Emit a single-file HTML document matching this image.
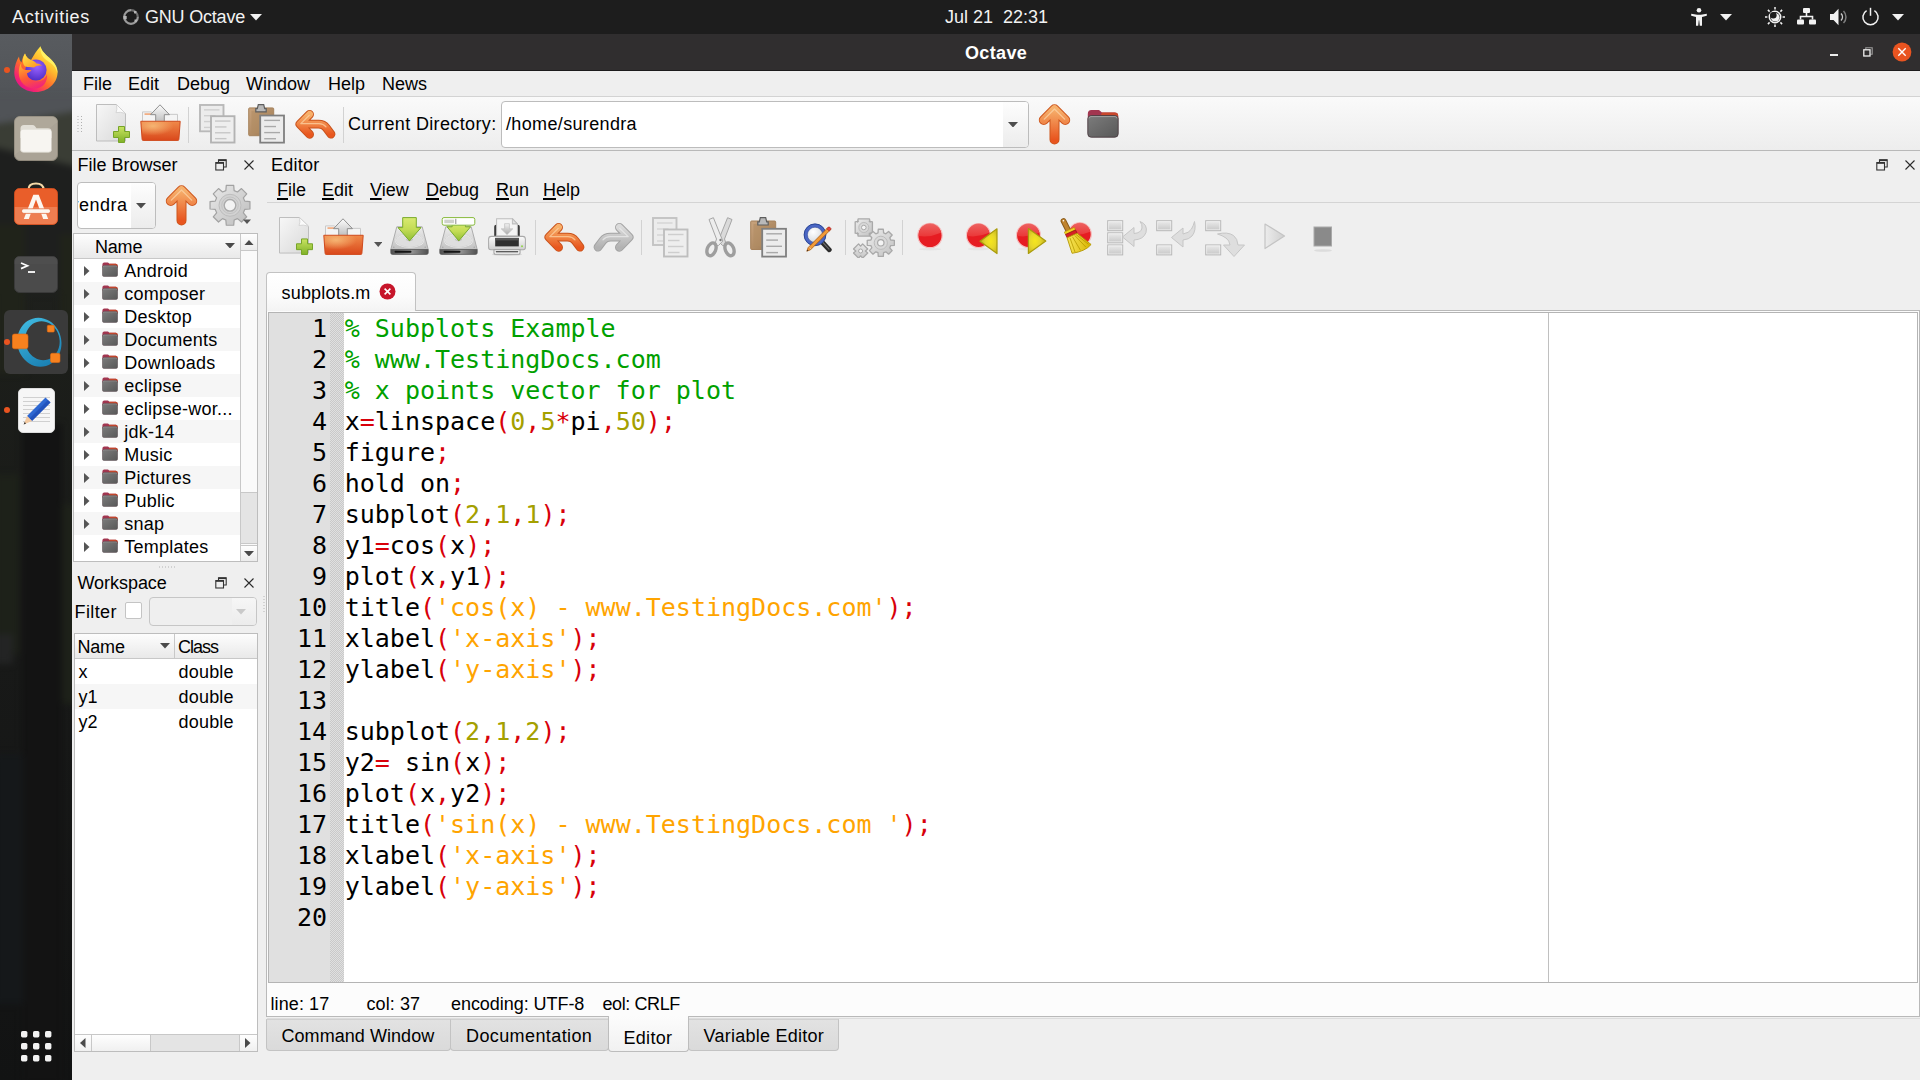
<!DOCTYPE html>
<html lang="en">
<head>
<meta charset="utf-8">
<title>Octave</title>
<style>
*{box-sizing:border-box;margin:0;padding:0}
html,body{width:1920px;height:1080px;overflow:hidden}
body{position:relative;font-family:"Liberation Sans",sans-serif;font-size:18px;color:#000;background:#161616}
.abs{position:absolute}
.t{position:absolute;white-space:pre;line-height:1}
u{text-decoration-thickness:1.500px;text-underline-offset:2px}
.code{position:absolute;white-space:pre;line-height:1;font-family:"DejaVu Sans Mono","Liberation Mono",monospace;font-size:25px}
.c{color:#00a000}.o{color:#d8000a}.n{color:#a4a000}.s{color:#ffa400}
</style>
</head>
<body>
<svg class="abs" style="left:0px;top:34px" width="72" height="1046" viewBox="0 0 72 1046" preserveAspectRatio="none"><defs><linearGradient id="wg" x1="0" y1="0" x2="0" y2="1"><stop offset="0" stop-color="#585b5f"/><stop offset=".07" stop-color="#505357"/><stop offset=".1" stop-color="#3a3c3a"/><stop offset=".14" stop-color="#222322"/><stop offset=".3" stop-color="#1c1e1a"/><stop offset=".6" stop-color="#181918"/><stop offset="1" stop-color="#121313"/></linearGradient><filter id="wb" x="-30%" y="-5%" width="160%" height="110%" color-interpolation-filters="sRGB"><feGaussianBlur stdDeviation="3"/></filter></defs><rect width="72" height="1046" fill="url(#wg)"/><g filter="url(#wb)"><path d="M-10 62L82 62L82 78L-10 90z" fill="#505357"/><path d="M-10 92L82 76L82 150L-10 120z" fill="#3a3d35"/><path d="M-10 112L82 134V260H-10z" fill="#1e1f1e"/><path d="M-5 190h30v150h-30zM60 200h20v120h-20z" fill="#20231a"/><path d="M-5 440h24v180h-24zM62 470h15v200h-15z" fill="#1d2119"/><path d="M-5 600h18v30h-18z" fill="#232424"/><path d="M22 390h40v660h-40z" fill="#131313"/><path d="M-5 720h28v250h-28z" fill="#15181a"/></g></svg>
<div class="abs" style="left:4px;top:310px;width:64px;height:64px;background:#3d3d3d;border-radius:6px;opacity:.92"></div>
<div class="abs" style="left:4px;top:67px;width:6px;height:6px;border-radius:3px;background:#e95420"></div>
<svg class="abs" style="left:14px;top:46px" width="44" height="46" viewBox="0 0 44 46" preserveAspectRatio="none"><defs>
<linearGradient id="g1" x1=".85" y1=".1" x2=".2" y2=".95"><stop offset="0" stop-color="#fff44f"/><stop offset=".3" stop-color="#ffbd2e"/><stop offset=".6" stop-color="#ff6a2b"/><stop offset=".85" stop-color="#f5266f"/><stop offset="1" stop-color="#e31587"/></linearGradient>
<radialGradient id="g2" cx=".55" cy=".35" r=".7"><stop offset="0" stop-color="#9a62ff"/><stop offset="1" stop-color="#4c2bc4"/></radialGradient>
<linearGradient id="g3" x1="0" y1="0" x2="1" y2="1"><stop offset="0" stop-color="#ffe84a"/><stop offset="1" stop-color="#ff8a1e"/></linearGradient>
<linearGradient id="g4" x1=".2" y1="0" x2=".6" y2="1"><stop offset="0" stop-color="#ffb52c"/><stop offset=".55" stop-color="#ff5a36"/><stop offset="1" stop-color="#f0257a"/></linearGradient></defs>
<path d="M26.500 .3C27.500 5 31 8 35 11.500C40 16 44 21 43.500 27.500C43 37 34 46 22 46C9 46 0 37 .3 26C.5 20 2.500 14.500 5 10.500C5.200 13 6 15 7.500 16.500C8 13 9.300 10 11 7.500C12 10.500 14 13 17 14C20 9 23 4 26.500 .3z" fill="url(#g1)"/>
<path d="M26.500 .3C27.500 5 31 8 35 11.500C40 16 44 21 43.500 27.500C42 21 38 17.500 33 14.500C28.500 11.500 26 7 26.500 .3z" fill="#fff56a" opacity=".85"/>
<circle cx="22" cy="24" r="10.600" fill="url(#g2)"/>
<path d="M7.500 16.500C6.500 20 7.500 23.500 11.500 24C14 24.300 15.500 23.500 17.500 24.300C16.500 26 14.500 26.500 13 27.200C13.500 32.500 18 35.800 23.500 35.500C28.500 35.200 32 32 33 28C34 35.500 29 42 22 42.500C12 43 4.800 36 4.800 27C4.800 22.500 5.800 19 7.500 16.500z" fill="url(#g4)"/>
<path d="M11 7.500C12 10.500 14 13 17 14C19.500 14.500 21.500 16 22.500 17.500C25 17.500 27 18.500 28 20C24.500 19 22 20 20 21.500C17 21 14 21.500 11.500 20.500C8.500 19 7.800 12.500 11 7.500z" fill="url(#g3)"/></svg>
<svg class="abs" style="left:14px;top:116px" width="44" height="45" viewBox="0 0 44 45" preserveAspectRatio="none"><rect x=".5" y=".5" width="43" height="44" rx="5.500" fill="#aaa396" stroke="#8f887b"/>
<path d="M.5 39V6Q.5 .5 6 .5H38Q43.500 .5 43.500 6z" fill="#b3ad9f" opacity=".55"/>
<path d="M6.500 12.500Q6.500 9 10 9h8.500q1.500 0 2.300 1l1.700 2.200H34Q37.500 12.200 37.500 15.500V22H6.500z" fill="#e2dfd7"/>
<rect x="6.500" y="13.800" width="31" height="22.500" rx="2.800" fill="#f7f5f1"/><path d="M6.500 33.500v-.2q0 3 3 3h25q3 0 3-3v.2" fill="none" stroke="#d8d4cb" stroke-width=".8"/></svg>
<svg class="abs" style="left:14px;top:182px" width="44" height="43" viewBox="0 0 44 43" preserveAspectRatio="none"><path d="M14.500 8.500V7.500q0-6 7.500-6t7.500 6v1" fill="none" stroke="#f5d9a8" stroke-width="2.200"/>
<rect x=".5" y="6.500" width="43" height="36" rx="5" fill="#e95e2a"/><path d="M.5 25h43v12.500q0 5-5 5h-33q-5 0-5-5z" fill="#ee7d50"/>
<rect x=".5" y="6.500" width="43" height="36" rx="5" fill="none" stroke="#d9501f" stroke-width=".8"/>
<path d="M9.800 37L19.300 12.800h5.400L34.200 37h-5L22 17.600 14.800 37z" fill="#fdf6ef"/>
<rect x="7.500" y="26.800" width="29" height="4.600" rx="2.300" fill="#fdf6ef" stroke="#e0602f" stroke-width=".7"/></svg>
<svg class="abs" style="left:14px;top:256px" width="44" height="37" viewBox="0 0 44 37" preserveAspectRatio="none"><rect x=".5" y=".5" width="43" height="36" rx="5" fill="#4b4b4b" stroke="#3a3a3a"/><path d="M.5 30V5.500Q.5 .5 5.500 .5H38.500Q43.500 .5 43.500 5.500V8H.5z" fill="#515151" opacity=".5"/>
<path d="M7 7l6.500 2.800L7 12.600" fill="none" stroke="#fff" stroke-width="1.700"/><path d="M14 16h7" stroke="#fff" stroke-width="1.800"/></svg>
<div class="abs" style="left:4px;top:339px;width:6px;height:6px;border-radius:3px;background:#e95420"></div>
<svg class="abs" style="left:12px;top:315px" width="52" height="52" viewBox="0 0 52 52" preserveAspectRatio="none"><defs><linearGradient id="g5" x1=".2" y1="0" x2=".7" y2="1"><stop offset="0" stop-color="#3fb9e0"/><stop offset="1" stop-color="#1a7fb2"/></linearGradient></defs>
<path d="M26.300 2.800A22 24.600 -12 1 0 26.400 2.800zM29.500 6.200A17.200 19.600 -12 1 1 29.400 6.200z" fill="url(#g5)" fill-rule="evenodd"/>
<rect x=".3" y="19" width="15.700" height="14.800" rx="2.200" fill="#f7811e" stroke="#e06a10" stroke-width=".6"/>
<rect x="35.300" y="10.300" width="7" height="6.800" rx="1.200" fill="#f7811e" stroke="#e06a10" stroke-width=".6"/>
<rect x="38.500" y="38.300" width="9.500" height="9.200" rx="1.500" fill="#f7811e" stroke="#e06a10" stroke-width=".6"/></svg>
<div class="abs" style="left:4px;top:407px;width:6px;height:6px;border-radius:3px;background:#e95420"></div>
<svg class="abs" style="left:18px;top:388px" width="37" height="45" viewBox="0 0 37 45" preserveAspectRatio="none"><defs><linearGradient id="g6" x1="0" y1="0" x2="1" y2="1"><stop offset="0" stop-color="#3d7be0"/><stop offset="1" stop-color="#1a4fc0"/></linearGradient></defs>
<rect x=".5" y=".5" width="36" height="44" rx="4.500" fill="#f6f6f6" stroke="#dcdcdc"/>
<path d="M5 9.500h27M5 13.500h27M5 17.500h27M5 21.500h27M5 25.500h27M5 29.500h27M5 33.500h27" stroke="#d0d0d0" stroke-width="1"/>
<path d="M27.500 9.500l5 5L14 33l-5-5z" fill="url(#g6)"/><path d="M30 12l2.500 2.500L14 33l-2.500-2.500z" fill="#1b46ad" opacity=".55"/>
<path d="M9 28l5 5-8.300 3.400z" fill="#f3c9a0"/><path d="M5.700 36.400l.9-2.400 1.500 1.500z" fill="#333"/></svg>
<svg class="abs" style="left:21px;top:1031px" width="31" height="31" viewBox="0 0 31 31" preserveAspectRatio="none"><rect x="0" y="0" width="6.400" height="6.400" rx="1.600" fill="#f3f3f3"/><rect x="12" y="0" width="6.400" height="6.400" rx="1.600" fill="#f3f3f3"/><rect x="24" y="0" width="6.400" height="6.400" rx="1.600" fill="#f3f3f3"/><rect x="0" y="12" width="6.400" height="6.400" rx="1.600" fill="#f3f3f3"/><rect x="12" y="12" width="6.400" height="6.400" rx="1.600" fill="#f3f3f3"/><rect x="24" y="12" width="6.400" height="6.400" rx="1.600" fill="#f3f3f3"/><rect x="0" y="24" width="6.400" height="6.400" rx="1.600" fill="#f3f3f3"/><rect x="12" y="24" width="6.400" height="6.400" rx="1.600" fill="#f3f3f3"/><rect x="24" y="24" width="6.400" height="6.400" rx="1.600" fill="#f3f3f3"/></svg>
<div class="abs" style="left:0px;top:0px;width:1920px;height:34px;background:#1d1d1d"></div>
<span class="t" style="left:12px;top:8.36px;font-size:18px;color:#f2f2f2;letter-spacing:.7px">Activities</span>
<svg class="abs" style="left:122px;top:8px" width="18" height="18" viewBox="0 0 18 18" preserveAspectRatio="none"><path d="M9 2.200A6.800 6.800 0 1 0 15.800 9" fill="none" stroke="#9a9a9a" stroke-width="2.200"/><path d="M9 2.200A6.800 6.800 0 0 1 15.800 9" fill="none" stroke="#6e6e6e" stroke-width="2.200"/><rect x="1.500" y="8" width="3.200" height="3.200" fill="#b5b5b5"/><rect x="12" y="3" width="2.400" height="2.400" fill="#b5b5b5"/><rect x="12.500" y="11.500" width="2.400" height="2.400" fill="#b5b5b5"/></svg>
<span class="t" style="left:145px;top:8.36px;font-size:18px;color:#f2f2f2;letter-spacing:-.2px">GNU Octave</span>
<svg class="abs" style="left:250px;top:14px" width="12" height="6.5" viewBox="0 0 12 6.5" preserveAspectRatio="none"><path d="M0 0h12L6.0 6.5z" fill="#f2f2f2"/></svg>
<span class="t" style="left:945px;top:8.36px;font-size:18px;color:#f2f2f2;">Jul 21&nbsp; 22:31</span>
<svg class="abs" style="left:1690px;top:7px" width="18" height="20" viewBox="0 0 18 20" preserveAspectRatio="none"><circle cx="9" cy="3.200" r="2.300" fill="#f2f2f2"/><path d="M1.200 6.800l6 1h3.600l6-1v1.900l-4.800 1.200v8.900h-2.200l-.6-5.600h-.4l-.6 5.600H6V9.900L1.200 8.700z" fill="#f2f2f2"/></svg>
<svg class="abs" style="left:1720px;top:14px" width="12" height="6.5" viewBox="0 0 12 6.5" preserveAspectRatio="none"><path d="M0 0h12L6.0 6.5z" fill="#f2f2f2"/></svg>
<svg class="abs" style="left:1764px;top:6px" width="22" height="22" viewBox="0 0 22 22" preserveAspectRatio="none"><g stroke="#f2f2f2" stroke-width="1.500" fill="none"><circle cx="11" cy="11" r="5.700"/><path d="M11 1v2.400M11 18.600V21M1 11h2.400M18.600 11H21M3.900 3.900l1.700 1.700M16.400 16.400l1.700 1.700M3.900 18.100l1.700-1.700M16.400 5.600l1.700-1.700"/></g><circle cx="11.200" cy="11.200" r="4.300" fill="#f2f2f2"/><circle cx="9.300" cy="9.200" r="3.300" fill="#1d1d1d"/></svg>
<svg class="abs" style="left:1796px;top:7px" width="21" height="19" viewBox="0 0 21 19" preserveAspectRatio="none"><g fill="#f2f2f2"><rect x="7" y="1" width="7" height="5" rx="1"/><rect x="1" y="12.500" width="7" height="5" rx="1"/><rect x="13" y="12.500" width="7" height="5" rx="1"/></g><path d="M10.500 6v3.500M4.500 12.500v-3h12v3" fill="none" stroke="#f2f2f2" stroke-width="1.600"/></svg>
<svg class="abs" style="left:1829px;top:8px" width="20" height="18" viewBox="0 0 20 18" preserveAspectRatio="none"><path d="M1 6h3.500L9.500 .8v16.400L4.500 12H1z" fill="#f2f2f2"/><path d="M12 5.500a5 5 0 0 1 0 7" fill="none" stroke="#c9c9c9" stroke-width="1.500"/><path d="M14.500 3a8.500 8.500 0 0 1 0 12" fill="none" stroke="#7d7d7d" stroke-width="1.500"/></svg>
<svg class="abs" style="left:1861px;top:7px" width="19" height="19" viewBox="0 0 19 19" preserveAspectRatio="none"><path d="M5.600 3.600a7.600 7.600 0 1 0 7.800 0" fill="none" stroke="#f2f2f2" stroke-width="1.500"/><path d="M9.500 .8v8" stroke="#f2f2f2" stroke-width="1.500"/></svg>
<svg class="abs" style="left:1892px;top:14px" width="12" height="6.5" viewBox="0 0 12 6.5" preserveAspectRatio="none"><path d="M0 0h12L6.0 6.5z" fill="#f2f2f2"/></svg>
<div class="abs" style="left:72px;top:34px;width:1848px;height:37px;background:#302e2f"></div>
<div class="abs" style="left:72px;top:70px;width:1848px;height:1px;background:#1c1b1c"></div>
<span class="t" style="left:965px;top:44.06px;font-size:18px;color:#fff;font-weight:bold;letter-spacing:.35px">Octave</span>
<div class="abs" style="left:1830px;top:54px;width:8px;height:1.5px;background:#ececec"></div>
<svg class="abs" style="left:1863px;top:47px" width="10" height="10" viewBox="0 0 10 10" preserveAspectRatio="none"><path d="M2.800 2.600V.8h6.400v6.400H7.400" fill="none" stroke="#9a9a9a" stroke-width="1.100"/><rect x=".8" y="2.800" width="6.200" height="6.200" fill="none" stroke="#f0f0f0" stroke-width="1.300"/></svg>
<svg class="abs" style="left:1892px;top:42px" width="20" height="20" viewBox="0 0 20 20" preserveAspectRatio="none"><circle cx="10" cy="10" r="9.400" fill="#e95420"/><path d="M6.300 6.300l7.400 7.400M13.700 6.300l-7.400 7.400" stroke="#fff" stroke-width="1.400"/></svg>
<div class="abs" style="left:72px;top:71px;width:1848px;height:1009px;background:#efefef"></div>
<div class="abs" style="left:72px;top:96px;width:1848px;height:1px;background:#d3d3d3"></div>
<span class="t" style="left:83px;top:75.36px;font-size:18px;">File</span>
<span class="t" style="left:128px;top:75.36px;font-size:18px;">Edit</span>
<span class="t" style="left:177px;top:75.36px;font-size:18px;">Debug</span>
<span class="t" style="left:246px;top:75.36px;font-size:18px;">Window</span>
<span class="t" style="left:328px;top:75.36px;font-size:18px;">Help</span>
<span class="t" style="left:382px;top:75.36px;font-size:18px;">News</span>
<div class="abs" style="left:72px;top:97px;width:1848px;height:53px;background:linear-gradient(180deg,#fafafa,#ededed)"></div>
<div class="abs" style="left:72px;top:150px;width:1848px;height:1px;background:#b9b9b9"></div>
<svg class="abs" style="left:77px;top:115px" width="6" height="18" viewBox="0 0 6 18" preserveAspectRatio="none"><rect x="0.5" y="1" width="1" height="1" fill="#b0b0b0"/><rect x="0.5" y="4" width="1" height="1" fill="#b0b0b0"/><rect x="0.5" y="7" width="1" height="1" fill="#b0b0b0"/><rect x="0.5" y="10" width="1" height="1" fill="#b0b0b0"/><rect x="0.5" y="13" width="1" height="1" fill="#b0b0b0"/><rect x="0.5" y="16" width="1" height="1" fill="#b0b0b0"/><rect x="4" y="1" width="1" height="1" fill="#b0b0b0"/><rect x="4" y="4" width="1" height="1" fill="#b0b0b0"/><rect x="4" y="7" width="1" height="1" fill="#b0b0b0"/><rect x="4" y="10" width="1" height="1" fill="#b0b0b0"/><rect x="4" y="13" width="1" height="1" fill="#b0b0b0"/><rect x="4" y="16" width="1" height="1" fill="#b0b0b0"/></svg>
<svg class="abs" style="left:96px;top:104px" width="34" height="39" viewBox="0 0 34 39" preserveAspectRatio="none"><defs><linearGradient id="g7" x1="0" y1="0" x2="1" y2="1"><stop offset="0" stop-color="#f7f7f7"/><stop offset="1" stop-color="#d9d9d9"/></linearGradient><linearGradient id="g8" x1="0" y1="0" x2="0" y2="1"><stop offset="0" stop-color="#c9e462"/><stop offset="1" stop-color="#7fb127"/></linearGradient></defs>
<path d="M.5 .5h20l9 9v27.5H.5z" fill="url(#g7)" stroke="#bdbdbd"/><path d="M20.500 .5q1 5.500-.5 8.200 4-1.200 9.500 .8z" fill="#fbfbfb" stroke="#cfcfcf" stroke-width=".8" stroke-linejoin="round"/>
<path d="M22.5 22.5h6v5h5v6h-5v5h-6v-5h-5v-6h5z" fill="url(#g8)" stroke="#76a428" stroke-linejoin="round"/></svg>
<svg class="abs" style="left:139.5px;top:103.8px" width="41" height="37.5" viewBox="0 0 41 38" preserveAspectRatio="none"><defs><linearGradient id="g9" x1="0" y1="0" x2="0" y2="1"><stop offset="0" stop-color="#f08a4a"/><stop offset="1" stop-color="#d9471a"/></linearGradient><linearGradient id="g10" x1="0" y1="0" x2="0" y2="1"><stop offset="0" stop-color="#fdfdfd"/><stop offset="1" stop-color="#bcbcbc"/></linearGradient></defs>
<path d="M2.5 8h9l2 2.5h24v8h-35z" fill="#f4f4f4" stroke="#c9c9c9"/><path d="M4.5 10.2h7" stroke="#f08a4a" stroke-width="1.2"/>
<path d="M20 .8l9.5 10h-5.2v8h-8.6v-8h-5.2z" fill="url(#g10)" stroke="#8f8f8f" stroke-linejoin="round"/>
<path d="M.8 17.5h39.4l-1.3 18.2q-.1 1.5-1.6 1.5H3.7q-1.5 0-1.6-1.5z" fill="url(#g9)" stroke="#cf4a1c"/><radialGradient id="g9h" cx=".3" cy=".25" r=".55"><stop offset="0" stop-color="#f9c884" stop-opacity=".75"/><stop offset="1" stop-color="#f9c884" stop-opacity="0"/></radialGradient><path d="M1.500 18h38l-1.200 17.500H2.700z" fill="url(#g9h)"/></svg>
<div class="abs" style="left:188px;top:107px;width:1px;height:36px;background:#d2d2d2"></div>
<svg class="abs" style="left:198.5px;top:104px" width="37" height="40" viewBox="0 0 37 41" preserveAspectRatio="none"><rect x="1" y="1" width="23.5" height="27" fill="#ececec" stroke="#b9b9b9" stroke-width="1.9"/><path d="M5 6.0h15.5" stroke="#cfcfcf" stroke-width="1.4"/><path d="M5 12.0h11.5" stroke="#cfcfcf" stroke-width="1.4"/><path d="M5 18.0h15.5" stroke="#cfcfcf" stroke-width="1.4"/><path d="M5 24.0h11.5" stroke="#cfcfcf" stroke-width="1.4"/><rect x="12" y="12.5" width="23.5" height="27" fill="#eeeeee" stroke="#b3b3b3" stroke-width="1.9"/><path d="M16 17.5h15.5" stroke="#c6c6c6" stroke-width="1.4"/><path d="M16 23.5h11.5" stroke="#c6c6c6" stroke-width="1.4"/><path d="M16 29.5h15.5" stroke="#c6c6c6" stroke-width="1.4"/><path d="M16 35.5h11.5" stroke="#c6c6c6" stroke-width="1.4"/></svg>
<svg class="abs" style="left:247.5px;top:104px" width="37" height="40" viewBox="0 0 37 41" preserveAspectRatio="none"><defs><linearGradient id="g11" x1="0" y1="0" x2="1" y2="1"><stop offset="0" stop-color="#c9a47e"/><stop offset="1" stop-color="#9b774f"/></linearGradient></defs>
<rect x=".7" y="4" width="25" height="28.5" rx="1" fill="url(#g11)" stroke="#a6825c"/><rect x="3.5" y="7" width="19.5" height="22.5" fill="#b08c63" opacity=".55"/>
<path d="M10.300 .6h5.400l1 4.200h1.500v3.200H7.800V4.800h1.500z" fill="#b9b9b9" stroke="#5e5e5e" stroke-width="1.200"/><rect x="12.2" y="11.8" width="23.8" height="27.8" fill="#ececec" stroke="#7f7f7f" stroke-width="1.8"/><path d="M16.2 16.8h15.8" stroke="#a9a9a9" stroke-width="1.4"/><path d="M16.2 23.1h11.8" stroke="#a9a9a9" stroke-width="1.4"/><path d="M16.2 29.3h15.8" stroke="#a9a9a9" stroke-width="1.4"/><path d="M16.2 35.6h11.8" stroke="#a9a9a9" stroke-width="1.4"/></svg>
<svg class="abs" style="left:295px;top:108.5px" width="41" height="31" viewBox="0 0 41 31" preserveAspectRatio="none"><defs><linearGradient id="g12" x1="0" y1="0" x2="0" y2="1"><stop offset="0" stop-color="#f8b06a"/><stop offset="1" stop-color="#e8571f"/></linearGradient></defs>
<g><path d="M14.600 5.300L4.900 15.200L14.600 25.300M6 15.200H23.500Q28.600 15.200 31.300 18.800L36 25.200" fill="none" stroke="#c9531c" stroke-width="8.800" stroke-linecap="round" stroke-linejoin="round"/>
<path d="M14.600 5.300L4.900 15.200L14.600 25.300M6 15.200H23.500Q28.600 15.200 31.300 18.800L36 25.200" fill="none" stroke="url(#g12)" stroke-width="6.800" stroke-linecap="round" stroke-linejoin="round"/>
<path d="M14.200 6.400L5.800 14.600H24Q28.500 14.700 31 17.800" fill="none" stroke="#fcd3a4" stroke-width="1.300" stroke-linecap="round" stroke-linejoin="round" opacity=".75"/></g></svg>
<div class="abs" style="left:343px;top:107px;width:1px;height:36px;background:#d2d2d2"></div>
<span class="t" style="left:348px;top:115.36px;font-size:18px;letter-spacing:.36px">Current Directory:</span>
<div class="abs" style="left:501px;top:101px;width:528px;height:47px;background:#fff;border:1px solid #bcbcbc;border-radius:4px"></div>
<div class="abs" style="left:1003px;top:102px;width:25px;height:45px;background:linear-gradient(180deg,#fdfdfd,#ececec);border-radius:0 3px 3px 0"></div>
<svg class="abs" style="left:1008px;top:121.5px" width="10" height="5.5" viewBox="0 0 10 5.5" preserveAspectRatio="none"><path d="M0 0h10L5.0 5.5z" fill="#4d4d4d"/></svg>
<span class="t" style="left:506px;top:115.36px;font-size:18px;letter-spacing:.35px">/home/surendra</span>
<svg class="abs" style="left:1037.5px;top:104px" width="33" height="41" viewBox="0 0 33 41" preserveAspectRatio="none"><defs><linearGradient id="g13" x1="0" y1="0" x2="0" y2="1"><stop offset="0" stop-color="#f6b06c"/><stop offset="1" stop-color="#e8551f"/></linearGradient></defs>
<path d="M5.800 16L16.500 5.300L27.200 16M16.500 7V35.500" fill="none" stroke="#cd561d" stroke-width="10" stroke-linecap="round" stroke-linejoin="round"/>
<path d="M5.800 16L16.500 5.300L27.200 16M16.500 7V35.500" fill="none" stroke="url(#g13)" stroke-width="8" stroke-linecap="round" stroke-linejoin="round"/>
<path d="M6.200 15.200L16.500 5L26.800 15.200" fill="none" stroke="#fbd3a6" stroke-width="1.200" stroke-linecap="round" stroke-linejoin="round" opacity=".75"/></svg>
<svg class="abs" style="left:1087px;top:108.5px" width="32" height="29" viewBox="0 0 32 29" preserveAspectRatio="none"><defs><linearGradient id="g14" x1="0" y1="0" x2="1" y2="1"><stop offset="0" stop-color="#7c7c7c"/><stop offset="1" stop-color="#585858"/></linearGradient></defs>
<path d="M.8 5Q.8 1 4.5 1H12l3 2.6h12.5Q31.2 3.6 31.2 7V10H.8z" fill="#a23650"/><path d="M15 3.6h12.5Q31.2 3.6 31.2 7v3H12z" fill="#c8472b"/>
<rect x=".8" y="6.6" width="30.4" height="21.6" rx="3.4" fill="url(#g14)" stroke="#4b3a40" stroke-width=".9"/><path d="M2 9.4Q2 7.6 4 7.6h24Q30 7.6 30 9.4" fill="none" stroke="#a7a7a7" stroke-width=".9"/></svg>
<span class="t" style="left:77.5px;top:155.86px;font-size:18px;">File Browser</span>
<svg class="abs" style="left:215px;top:158.5px" width="12" height="12" viewBox="0 0 12 12" preserveAspectRatio="none"><path d="M3.500 3V.8h7.700v7.200H8.500" fill="none" stroke="#333" stroke-width="1.100"/><path d="M3.500 1.300h7.700" stroke="#333" stroke-width="1.600"/><rect x=".8" y="3.600" width="7.700" height="7.400" fill="none" stroke="#333" stroke-width="1.100"/><path d="M.8 4h7.700" stroke="#333" stroke-width="1.600"/></svg>
<svg class="abs" style="left:244px;top:160px" width="10" height="10" viewBox="0 0 10 10" preserveAspectRatio="none"><path d="M.5 .5l9 9M9.500 .5l-9 9" stroke="#2a2a2a" stroke-width="1.100"/></svg>
<div class="abs" style="left:77px;top:182px;width:79px;height:47px;background:#fff;border:1px solid #bdbdbd;border-radius:4px"></div>
<div class="abs" style="left:131px;top:183px;width:24px;height:45px;background:linear-gradient(180deg,#fdfdfd,#ececec);border-radius:0 3px 3px 0"></div>
<div class="abs" style="left:78px;top:190px;width:52px;height:30px;overflow:hidden"><span class="t" style="left:-5.5px;top:5.86px;font-size:18px;letter-spacing:.5px">rendra</span></div>
<svg class="abs" style="left:136px;top:203px" width="10" height="5.5" viewBox="0 0 10 5.5" preserveAspectRatio="none"><path d="M0 0h10L5.0 5.5z" fill="#4d4d4d"/></svg>
<svg class="abs" style="left:164.5px;top:184.5px" width="33" height="41" viewBox="0 0 33 41" preserveAspectRatio="none"><defs><linearGradient id="g15" x1="0" y1="0" x2="0" y2="1"><stop offset="0" stop-color="#f6b06c"/><stop offset="1" stop-color="#e8551f"/></linearGradient></defs>
<path d="M5.800 16L16.500 5.300L27.200 16M16.500 7V35.500" fill="none" stroke="#cd561d" stroke-width="10" stroke-linecap="round" stroke-linejoin="round"/>
<path d="M5.800 16L16.500 5.300L27.200 16M16.500 7V35.500" fill="none" stroke="url(#g15)" stroke-width="8" stroke-linecap="round" stroke-linejoin="round"/>
<path d="M6.200 15.200L16.500 5L26.800 15.200" fill="none" stroke="#fbd3a6" stroke-width="1.200" stroke-linecap="round" stroke-linejoin="round" opacity=".75"/></svg>
<svg class="abs" style="left:209px;top:184px" width="42" height="42" viewBox="0 0 42 42" preserveAspectRatio="none"><defs><linearGradient id="g16" x1="0" y1="0" x2="1" y2="1"><stop offset="0" stop-color="#e9e9e9"/><stop offset="1" stop-color="#bdbdbd"/></linearGradient></defs>
<path d="M16.84 6.58L17.29 1.34L24.71 1.34L25.16 6.58L28.47 7.94L32.49 4.56L37.74 9.81L34.36 13.83L35.72 17.14L40.96 17.59L40.96 25.01L35.72 25.46L34.36 28.77L37.74 32.79L32.49 38.04L28.47 34.66L25.16 36.02L24.71 41.26L17.29 41.26L16.84 36.02L13.53 34.66L9.51 38.04L4.26 32.79L7.64 28.77L6.28 25.46L1.04 25.01L1.04 17.59L6.28 17.14L7.64 13.83L4.26 9.81L9.51 4.56L13.53 7.94z" fill="url(#g16)" stroke="#a2a2a2" stroke-width="1.2" stroke-linejoin="round"/>
<circle cx="21" cy="21.300" r="11" fill="#d2d2d2" stroke="#bdbdbd" stroke-width="1"/><circle cx="21" cy="21.300" r="8.300" fill="none" stroke="#c2c2c2" stroke-width="1"/><circle cx="21" cy="21.300" r="5.800" fill="#f3f3f3" stroke="#ababab" stroke-width="1.400"/><path d="M34 35.500h8l-4 4.600z" fill="#555"/></svg>
<div class="abs" style="left:73px;top:233px;width:185px;height:329px;background:#fff;border:1px solid #bdbdbd"></div>
<div class="abs" style="left:74px;top:234px;width:167px;height:25px;background:linear-gradient(180deg,#fdfdfd,#e9e9e9);border-bottom:1px solid #c8c8c8;border-right:1px solid #c8c8c8"></div>
<span class="t" style="left:95px;top:238.16px;font-size:18px;letter-spacing:-.2px">Name</span>
<svg class="abs" style="left:225px;top:242.5px" width="10" height="5.5" viewBox="0 0 10 5.5" preserveAspectRatio="none"><path d="M0 0h10L5.0 5.5z" fill="#4a4a4a"/></svg>
<div class="abs" style="left:241px;top:234px;width:16px;height:327px;background:#fafafa"></div>
<div class="abs" style="left:240px;top:234px;width:1px;height:327px;background:#c8c8c8"></div>
<div class="abs" style="left:241px;top:234px;width:16px;height:17px;background:linear-gradient(180deg,#fefefe,#ececec);border-bottom:1px solid #c8c8c8"></div>
<svg class="abs" style="left:244px;top:239.5px" width="10" height="5.5" viewBox="0 0 10 5.5" preserveAspectRatio="none"><path d="M0 5.5h10L5.0 0z" fill="#4a4a4a"/></svg>
<div class="abs" style="left:241px;top:492px;width:16px;height:52px;background:#e4e4e4;border-top:1px solid #c8c8c8;border-bottom:1px solid #c8c8c8"></div>
<div class="abs" style="left:241px;top:545px;width:16px;height:16px;background:linear-gradient(180deg,#fefefe,#ececec);border-top:1px solid #c8c8c8"></div>
<svg class="abs" style="left:244px;top:550.5px" width="10" height="5.5" viewBox="0 0 10 5.5" preserveAspectRatio="none"><path d="M0 0h10L5.0 5.5z" fill="#4a4a4a"/></svg>
<svg class="abs" style="left:84px;top:266px" width="5.5" height="10" viewBox="0 0 5.5 10" preserveAspectRatio="none"><path d="M0 0L5.5 5.0L0 10z" fill="#555"/></svg>
<svg class="abs" style="left:102px;top:262px" width="16" height="15" viewBox="0 0 32 29" preserveAspectRatio="none"><defs><linearGradient id="g17" x1="0" y1="0" x2="1" y2="1"><stop offset="0" stop-color="#7c7c7c"/><stop offset="1" stop-color="#585858"/></linearGradient></defs>
<path d="M.8 5Q.8 1 4.5 1H12l3 2.6h12.5Q31.2 3.6 31.2 7V10H.8z" fill="#a23650"/><path d="M15 3.6h12.5Q31.2 3.6 31.2 7v3H12z" fill="#c8472b"/>
<rect x=".8" y="6.6" width="30.4" height="21.6" rx="3.4" fill="url(#g17)" stroke="#4b3a40" stroke-width=".9"/><path d="M2 9.4Q2 7.6 4 7.6h24Q30 7.6 30 9.4" fill="none" stroke="#a7a7a7" stroke-width=".9"/></svg>
<span class="t" style="left:124.3px;top:261.56px;font-size:18px;letter-spacing:.25px">Android</span>
<div class="abs" style="left:74px;top:282px;width:166px;height:23px;background:#f6f6f6"></div>
<svg class="abs" style="left:84px;top:289px" width="5.5" height="10" viewBox="0 0 5.5 10" preserveAspectRatio="none"><path d="M0 0L5.5 5.0L0 10z" fill="#555"/></svg>
<svg class="abs" style="left:102px;top:285px" width="16" height="15" viewBox="0 0 32 29" preserveAspectRatio="none"><defs><linearGradient id="g18" x1="0" y1="0" x2="1" y2="1"><stop offset="0" stop-color="#7c7c7c"/><stop offset="1" stop-color="#585858"/></linearGradient></defs>
<path d="M.8 5Q.8 1 4.5 1H12l3 2.6h12.5Q31.2 3.6 31.2 7V10H.8z" fill="#a23650"/><path d="M15 3.6h12.5Q31.2 3.6 31.2 7v3H12z" fill="#c8472b"/>
<rect x=".8" y="6.6" width="30.4" height="21.6" rx="3.4" fill="url(#g18)" stroke="#4b3a40" stroke-width=".9"/><path d="M2 9.4Q2 7.6 4 7.6h24Q30 7.6 30 9.4" fill="none" stroke="#a7a7a7" stroke-width=".9"/></svg>
<span class="t" style="left:124.3px;top:284.56px;font-size:18px;letter-spacing:.25px">composer</span>
<svg class="abs" style="left:84px;top:312px" width="5.5" height="10" viewBox="0 0 5.5 10" preserveAspectRatio="none"><path d="M0 0L5.5 5.0L0 10z" fill="#555"/></svg>
<svg class="abs" style="left:102px;top:308px" width="16" height="15" viewBox="0 0 32 29" preserveAspectRatio="none"><defs><linearGradient id="g19" x1="0" y1="0" x2="1" y2="1"><stop offset="0" stop-color="#7c7c7c"/><stop offset="1" stop-color="#585858"/></linearGradient></defs>
<path d="M.8 5Q.8 1 4.5 1H12l3 2.6h12.5Q31.2 3.6 31.2 7V10H.8z" fill="#a23650"/><path d="M15 3.6h12.5Q31.2 3.6 31.2 7v3H12z" fill="#c8472b"/>
<rect x=".8" y="6.6" width="30.4" height="21.6" rx="3.4" fill="url(#g19)" stroke="#4b3a40" stroke-width=".9"/><path d="M2 9.4Q2 7.6 4 7.6h24Q30 7.6 30 9.4" fill="none" stroke="#a7a7a7" stroke-width=".9"/></svg>
<span class="t" style="left:124.3px;top:307.56px;font-size:18px;letter-spacing:.25px">Desktop</span>
<div class="abs" style="left:74px;top:328px;width:166px;height:23px;background:#f6f6f6"></div>
<svg class="abs" style="left:84px;top:335px" width="5.5" height="10" viewBox="0 0 5.5 10" preserveAspectRatio="none"><path d="M0 0L5.5 5.0L0 10z" fill="#555"/></svg>
<svg class="abs" style="left:102px;top:331px" width="16" height="15" viewBox="0 0 32 29" preserveAspectRatio="none"><defs><linearGradient id="g20" x1="0" y1="0" x2="1" y2="1"><stop offset="0" stop-color="#7c7c7c"/><stop offset="1" stop-color="#585858"/></linearGradient></defs>
<path d="M.8 5Q.8 1 4.5 1H12l3 2.6h12.5Q31.2 3.6 31.2 7V10H.8z" fill="#a23650"/><path d="M15 3.6h12.5Q31.2 3.6 31.2 7v3H12z" fill="#c8472b"/>
<rect x=".8" y="6.6" width="30.4" height="21.6" rx="3.4" fill="url(#g20)" stroke="#4b3a40" stroke-width=".9"/><path d="M2 9.4Q2 7.6 4 7.6h24Q30 7.6 30 9.4" fill="none" stroke="#a7a7a7" stroke-width=".9"/></svg>
<span class="t" style="left:124.3px;top:330.56px;font-size:18px;letter-spacing:.25px">Documents</span>
<svg class="abs" style="left:84px;top:358px" width="5.5" height="10" viewBox="0 0 5.5 10" preserveAspectRatio="none"><path d="M0 0L5.5 5.0L0 10z" fill="#555"/></svg>
<svg class="abs" style="left:102px;top:354px" width="16" height="15" viewBox="0 0 32 29" preserveAspectRatio="none"><defs><linearGradient id="g21" x1="0" y1="0" x2="1" y2="1"><stop offset="0" stop-color="#7c7c7c"/><stop offset="1" stop-color="#585858"/></linearGradient></defs>
<path d="M.8 5Q.8 1 4.5 1H12l3 2.6h12.5Q31.2 3.6 31.2 7V10H.8z" fill="#a23650"/><path d="M15 3.6h12.5Q31.2 3.6 31.2 7v3H12z" fill="#c8472b"/>
<rect x=".8" y="6.6" width="30.4" height="21.6" rx="3.4" fill="url(#g21)" stroke="#4b3a40" stroke-width=".9"/><path d="M2 9.4Q2 7.6 4 7.6h24Q30 7.6 30 9.4" fill="none" stroke="#a7a7a7" stroke-width=".9"/></svg>
<span class="t" style="left:124.3px;top:353.56px;font-size:18px;letter-spacing:.25px">Downloads</span>
<div class="abs" style="left:74px;top:374px;width:166px;height:23px;background:#f6f6f6"></div>
<svg class="abs" style="left:84px;top:381px" width="5.5" height="10" viewBox="0 0 5.5 10" preserveAspectRatio="none"><path d="M0 0L5.5 5.0L0 10z" fill="#555"/></svg>
<svg class="abs" style="left:102px;top:377px" width="16" height="15" viewBox="0 0 32 29" preserveAspectRatio="none"><defs><linearGradient id="g22" x1="0" y1="0" x2="1" y2="1"><stop offset="0" stop-color="#7c7c7c"/><stop offset="1" stop-color="#585858"/></linearGradient></defs>
<path d="M.8 5Q.8 1 4.5 1H12l3 2.6h12.5Q31.2 3.6 31.2 7V10H.8z" fill="#a23650"/><path d="M15 3.6h12.5Q31.2 3.6 31.2 7v3H12z" fill="#c8472b"/>
<rect x=".8" y="6.6" width="30.4" height="21.6" rx="3.4" fill="url(#g22)" stroke="#4b3a40" stroke-width=".9"/><path d="M2 9.4Q2 7.6 4 7.6h24Q30 7.6 30 9.4" fill="none" stroke="#a7a7a7" stroke-width=".9"/></svg>
<span class="t" style="left:124.3px;top:376.56px;font-size:18px;letter-spacing:.25px">eclipse</span>
<svg class="abs" style="left:84px;top:404px" width="5.5" height="10" viewBox="0 0 5.5 10" preserveAspectRatio="none"><path d="M0 0L5.5 5.0L0 10z" fill="#555"/></svg>
<svg class="abs" style="left:102px;top:400px" width="16" height="15" viewBox="0 0 32 29" preserveAspectRatio="none"><defs><linearGradient id="g23" x1="0" y1="0" x2="1" y2="1"><stop offset="0" stop-color="#7c7c7c"/><stop offset="1" stop-color="#585858"/></linearGradient></defs>
<path d="M.8 5Q.8 1 4.5 1H12l3 2.6h12.5Q31.2 3.6 31.2 7V10H.8z" fill="#a23650"/><path d="M15 3.6h12.5Q31.2 3.6 31.2 7v3H12z" fill="#c8472b"/>
<rect x=".8" y="6.6" width="30.4" height="21.6" rx="3.4" fill="url(#g23)" stroke="#4b3a40" stroke-width=".9"/><path d="M2 9.4Q2 7.6 4 7.6h24Q30 7.6 30 9.4" fill="none" stroke="#a7a7a7" stroke-width=".9"/></svg>
<span class="t" style="left:124.3px;top:399.56px;font-size:18px;letter-spacing:.25px">eclipse-wor...</span>
<div class="abs" style="left:74px;top:420px;width:166px;height:23px;background:#f6f6f6"></div>
<svg class="abs" style="left:84px;top:427px" width="5.5" height="10" viewBox="0 0 5.5 10" preserveAspectRatio="none"><path d="M0 0L5.5 5.0L0 10z" fill="#555"/></svg>
<svg class="abs" style="left:102px;top:423px" width="16" height="15" viewBox="0 0 32 29" preserveAspectRatio="none"><defs><linearGradient id="g24" x1="0" y1="0" x2="1" y2="1"><stop offset="0" stop-color="#7c7c7c"/><stop offset="1" stop-color="#585858"/></linearGradient></defs>
<path d="M.8 5Q.8 1 4.5 1H12l3 2.6h12.5Q31.2 3.6 31.2 7V10H.8z" fill="#a23650"/><path d="M15 3.6h12.5Q31.2 3.6 31.2 7v3H12z" fill="#c8472b"/>
<rect x=".8" y="6.6" width="30.4" height="21.6" rx="3.4" fill="url(#g24)" stroke="#4b3a40" stroke-width=".9"/><path d="M2 9.4Q2 7.6 4 7.6h24Q30 7.6 30 9.4" fill="none" stroke="#a7a7a7" stroke-width=".9"/></svg>
<span class="t" style="left:124.3px;top:422.56px;font-size:18px;letter-spacing:.25px">jdk-14</span>
<svg class="abs" style="left:84px;top:450px" width="5.5" height="10" viewBox="0 0 5.5 10" preserveAspectRatio="none"><path d="M0 0L5.5 5.0L0 10z" fill="#555"/></svg>
<svg class="abs" style="left:102px;top:446px" width="16" height="15" viewBox="0 0 32 29" preserveAspectRatio="none"><defs><linearGradient id="g25" x1="0" y1="0" x2="1" y2="1"><stop offset="0" stop-color="#7c7c7c"/><stop offset="1" stop-color="#585858"/></linearGradient></defs>
<path d="M.8 5Q.8 1 4.5 1H12l3 2.6h12.5Q31.2 3.6 31.2 7V10H.8z" fill="#a23650"/><path d="M15 3.6h12.5Q31.2 3.6 31.2 7v3H12z" fill="#c8472b"/>
<rect x=".8" y="6.6" width="30.4" height="21.6" rx="3.4" fill="url(#g25)" stroke="#4b3a40" stroke-width=".9"/><path d="M2 9.4Q2 7.6 4 7.6h24Q30 7.6 30 9.4" fill="none" stroke="#a7a7a7" stroke-width=".9"/></svg>
<span class="t" style="left:124.3px;top:445.56px;font-size:18px;letter-spacing:.25px">Music</span>
<div class="abs" style="left:74px;top:466px;width:166px;height:23px;background:#f6f6f6"></div>
<svg class="abs" style="left:84px;top:473px" width="5.5" height="10" viewBox="0 0 5.5 10" preserveAspectRatio="none"><path d="M0 0L5.5 5.0L0 10z" fill="#555"/></svg>
<svg class="abs" style="left:102px;top:469px" width="16" height="15" viewBox="0 0 32 29" preserveAspectRatio="none"><defs><linearGradient id="g26" x1="0" y1="0" x2="1" y2="1"><stop offset="0" stop-color="#7c7c7c"/><stop offset="1" stop-color="#585858"/></linearGradient></defs>
<path d="M.8 5Q.8 1 4.5 1H12l3 2.6h12.5Q31.2 3.6 31.2 7V10H.8z" fill="#a23650"/><path d="M15 3.6h12.5Q31.2 3.6 31.2 7v3H12z" fill="#c8472b"/>
<rect x=".8" y="6.6" width="30.4" height="21.6" rx="3.4" fill="url(#g26)" stroke="#4b3a40" stroke-width=".9"/><path d="M2 9.4Q2 7.6 4 7.6h24Q30 7.6 30 9.4" fill="none" stroke="#a7a7a7" stroke-width=".9"/></svg>
<span class="t" style="left:124.3px;top:468.56px;font-size:18px;letter-spacing:.25px">Pictures</span>
<svg class="abs" style="left:84px;top:496px" width="5.5" height="10" viewBox="0 0 5.5 10" preserveAspectRatio="none"><path d="M0 0L5.5 5.0L0 10z" fill="#555"/></svg>
<svg class="abs" style="left:102px;top:492px" width="16" height="15" viewBox="0 0 32 29" preserveAspectRatio="none"><defs><linearGradient id="g27" x1="0" y1="0" x2="1" y2="1"><stop offset="0" stop-color="#7c7c7c"/><stop offset="1" stop-color="#585858"/></linearGradient></defs>
<path d="M.8 5Q.8 1 4.5 1H12l3 2.6h12.5Q31.2 3.6 31.2 7V10H.8z" fill="#a23650"/><path d="M15 3.6h12.5Q31.2 3.6 31.2 7v3H12z" fill="#c8472b"/>
<rect x=".8" y="6.6" width="30.4" height="21.6" rx="3.4" fill="url(#g27)" stroke="#4b3a40" stroke-width=".9"/><path d="M2 9.4Q2 7.6 4 7.6h24Q30 7.6 30 9.4" fill="none" stroke="#a7a7a7" stroke-width=".9"/></svg>
<span class="t" style="left:124.3px;top:491.56px;font-size:18px;letter-spacing:.25px">Public</span>
<div class="abs" style="left:74px;top:512px;width:166px;height:23px;background:#f6f6f6"></div>
<svg class="abs" style="left:84px;top:519px" width="5.5" height="10" viewBox="0 0 5.5 10" preserveAspectRatio="none"><path d="M0 0L5.5 5.0L0 10z" fill="#555"/></svg>
<svg class="abs" style="left:102px;top:515px" width="16" height="15" viewBox="0 0 32 29" preserveAspectRatio="none"><defs><linearGradient id="g28" x1="0" y1="0" x2="1" y2="1"><stop offset="0" stop-color="#7c7c7c"/><stop offset="1" stop-color="#585858"/></linearGradient></defs>
<path d="M.8 5Q.8 1 4.5 1H12l3 2.6h12.5Q31.2 3.6 31.2 7V10H.8z" fill="#a23650"/><path d="M15 3.6h12.5Q31.2 3.6 31.2 7v3H12z" fill="#c8472b"/>
<rect x=".8" y="6.6" width="30.4" height="21.6" rx="3.4" fill="url(#g28)" stroke="#4b3a40" stroke-width=".9"/><path d="M2 9.4Q2 7.6 4 7.6h24Q30 7.6 30 9.4" fill="none" stroke="#a7a7a7" stroke-width=".9"/></svg>
<span class="t" style="left:124.3px;top:514.56px;font-size:18px;letter-spacing:.25px">snap</span>
<svg class="abs" style="left:84px;top:542px" width="5.5" height="10" viewBox="0 0 5.5 10" preserveAspectRatio="none"><path d="M0 0L5.5 5.0L0 10z" fill="#555"/></svg>
<svg class="abs" style="left:102px;top:538px" width="16" height="15" viewBox="0 0 32 29" preserveAspectRatio="none"><defs><linearGradient id="g29" x1="0" y1="0" x2="1" y2="1"><stop offset="0" stop-color="#7c7c7c"/><stop offset="1" stop-color="#585858"/></linearGradient></defs>
<path d="M.8 5Q.8 1 4.5 1H12l3 2.6h12.5Q31.2 3.6 31.2 7V10H.8z" fill="#a23650"/><path d="M15 3.6h12.5Q31.2 3.6 31.2 7v3H12z" fill="#c8472b"/>
<rect x=".8" y="6.6" width="30.4" height="21.6" rx="3.4" fill="url(#g29)" stroke="#4b3a40" stroke-width=".9"/><path d="M2 9.4Q2 7.6 4 7.6h24Q30 7.6 30 9.4" fill="none" stroke="#a7a7a7" stroke-width=".9"/></svg>
<span class="t" style="left:124.3px;top:537.56px;font-size:18px;letter-spacing:.25px">Templates</span>
<svg class="abs" style="left:159px;top:565.5px" width="18" height="2" viewBox="0 0 18 2" preserveAspectRatio="none"><rect x="0" y=".5" width="1" height="1" fill="#b4b4b4"/><rect x="3" y=".5" width="1" height="1" fill="#b4b4b4"/><rect x="6" y=".5" width="1" height="1" fill="#b4b4b4"/><rect x="9" y=".5" width="1" height="1" fill="#b4b4b4"/><rect x="12" y=".5" width="1" height="1" fill="#b4b4b4"/><rect x="15" y=".5" width="1" height="1" fill="#b4b4b4"/></svg>
<svg class="abs" style="left:263px;top:596px" width="2" height="18" viewBox="0 0 2 18" preserveAspectRatio="none"><rect x=".5" y="0" width="1" height="1" fill="#b4b4b4"/><rect x=".5" y="3" width="1" height="1" fill="#b4b4b4"/><rect x=".5" y="6" width="1" height="1" fill="#b4b4b4"/><rect x=".5" y="9" width="1" height="1" fill="#b4b4b4"/><rect x=".5" y="12" width="1" height="1" fill="#b4b4b4"/><rect x=".5" y="15" width="1" height="1" fill="#b4b4b4"/></svg>
<span class="t" style="left:77.5px;top:573.66px;font-size:18px;letter-spacing:-.05px">Workspace</span>
<svg class="abs" style="left:215px;top:576.5px" width="12" height="12" viewBox="0 0 12 12" preserveAspectRatio="none"><path d="M3.500 3V.8h7.700v7.200H8.500" fill="none" stroke="#333" stroke-width="1.100"/><path d="M3.500 1.300h7.700" stroke="#333" stroke-width="1.600"/><rect x=".8" y="3.600" width="7.700" height="7.400" fill="none" stroke="#333" stroke-width="1.100"/><path d="M.8 4h7.700" stroke="#333" stroke-width="1.600"/></svg>
<svg class="abs" style="left:244px;top:578px" width="10" height="10" viewBox="0 0 10 10" preserveAspectRatio="none"><path d="M.5 .5l9 9M9.500 .5l-9 9" stroke="#2a2a2a" stroke-width="1.100"/></svg>
<span class="t" style="left:74.5px;top:603.16px;font-size:18px;letter-spacing:.4px">Filter</span>
<div class="abs" style="left:125px;top:602px;width:17px;height:17px;background:#fff;border:1px solid #c4c4c4;border-radius:2px"></div>
<div class="abs" style="left:149px;top:597px;width:108px;height:29px;background:#efefef;border:1px solid #c6c6c6;border-radius:4px"></div>
<div class="abs" style="left:232px;top:598px;width:24px;height:27px;background:linear-gradient(180deg,#f6f6f6,#ececec);border-radius:0 3px 3px 0"></div>
<svg class="abs" style="left:236px;top:609px" width="10" height="5.5" viewBox="0 0 10 5.5" preserveAspectRatio="none"><path d="M0 0h10L5.0 5.5z" fill="#c9c9c9"/></svg>
<div class="abs" style="left:74px;top:633px;width:184px;height:419px;background:#fff;border:1px solid #bdbdbd"></div>
<div class="abs" style="left:75px;top:634px;width:182px;height:25px;background:linear-gradient(180deg,#fdfdfd,#e9e9e9);border-bottom:1px solid #c8c8c8"></div>
<div class="abs" style="left:174px;top:634px;width:1px;height:24px;background:#c8c8c8"></div>
<span class="t" style="left:77.5px;top:637.56px;font-size:18px;letter-spacing:-.2px">Name</span>
<svg class="abs" style="left:160px;top:643px" width="10" height="5.5" viewBox="0 0 10 5.5" preserveAspectRatio="none"><path d="M0 0h10L5.0 5.5z" fill="#4a4a4a"/></svg>
<span class="t" style="left:178px;top:637.56px;font-size:18px;letter-spacing:-1px">Class</span>
<span class="t" style="left:78.5px;top:663.26px;font-size:18px;">x</span>
<span class="t" style="left:178.5px;top:663.26px;font-size:18px;letter-spacing:.2px">double</span>
<div class="abs" style="left:75px;top:684px;width:182px;height:25px;background:#f6f6f6"></div>
<span class="t" style="left:78.5px;top:688.26px;font-size:18px;">y1</span>
<span class="t" style="left:178.5px;top:688.26px;font-size:18px;letter-spacing:.2px">double</span>
<span class="t" style="left:78.5px;top:713.26px;font-size:18px;">y2</span>
<span class="t" style="left:178.5px;top:713.26px;font-size:18px;letter-spacing:.2px">double</span>
<div class="abs" style="left:75px;top:1034px;width:182px;height:17px;background:#e4e4e4;border-top:1px solid #c8c8c8"></div>
<div class="abs" style="left:75px;top:1035px;width:17px;height:16px;background:linear-gradient(180deg,#fefefe,#f0f0f0);border-right:1px solid #c8c8c8"></div>
<div class="abs" style="left:92px;top:1035px;width:59px;height:16px;background:linear-gradient(180deg,#fefefe,#f0f0f0);border-right:1px solid #c8c8c8"></div>
<div class="abs" style="left:239px;top:1035px;width:18px;height:16px;background:linear-gradient(180deg,#fefefe,#f0f0f0);border-left:1px solid #c8c8c8"></div>
<svg class="abs" style="left:80px;top:1038px" width="5.5" height="10" viewBox="0 0 5.5 10" preserveAspectRatio="none"><path d="M5.5 0L0 5.0L5.5 10z" fill="#4a4a4a"/></svg>
<svg class="abs" style="left:245px;top:1038px" width="5.5" height="10" viewBox="0 0 5.5 10" preserveAspectRatio="none"><path d="M0 0L5.5 5.0L0 10z" fill="#4a4a4a"/></svg>
<span class="t" style="left:271px;top:155.86px;font-size:18px;letter-spacing:.25px">Editor</span>
<svg class="abs" style="left:1876px;top:158.5px" width="12" height="12" viewBox="0 0 12 12" preserveAspectRatio="none"><path d="M3.500 3V.8h7.700v7.200H8.500" fill="none" stroke="#333" stroke-width="1.100"/><path d="M3.500 1.300h7.700" stroke="#333" stroke-width="1.600"/><rect x=".8" y="3.600" width="7.700" height="7.400" fill="none" stroke="#333" stroke-width="1.100"/><path d="M.8 4h7.700" stroke="#333" stroke-width="1.600"/></svg>
<svg class="abs" style="left:1904.5px;top:160px" width="10" height="10" viewBox="0 0 10 10" preserveAspectRatio="none"><path d="M.5 .5l9 9M9.500 .5l-9 9" stroke="#2a2a2a" stroke-width="1.100"/></svg>
<span class="t" style="left:277px;top:181.06px;font-size:18px;"><u>F</u>ile</span>
<span class="t" style="left:322px;top:181.06px;font-size:18px;"><u>E</u>dit</span>
<span class="t" style="left:370px;top:181.06px;font-size:18px;"><u>V</u>iew</span>
<span class="t" style="left:426px;top:181.06px;font-size:18px;"><u>D</u>ebug</span>
<span class="t" style="left:496px;top:181.06px;font-size:18px;"><u>R</u>un</span>
<span class="t" style="left:543px;top:181.06px;font-size:18px;"><u>H</u>elp</span>
<div class="abs" style="left:267px;top:202px;width:1653px;height:1px;background:#d4d4d4"></div>
<svg class="abs" style="left:279px;top:217px" width="34" height="38" viewBox="0 0 34 39" preserveAspectRatio="none"><defs><linearGradient id="g30" x1="0" y1="0" x2="1" y2="1"><stop offset="0" stop-color="#f7f7f7"/><stop offset="1" stop-color="#d9d9d9"/></linearGradient><linearGradient id="g31" x1="0" y1="0" x2="0" y2="1"><stop offset="0" stop-color="#c9e462"/><stop offset="1" stop-color="#7fb127"/></linearGradient></defs>
<path d="M.5 .5h20l9 9v27.5H.5z" fill="url(#g30)" stroke="#bdbdbd"/><path d="M20.500 .5q1 5.500-.5 8.200 4-1.200 9.500 .8z" fill="#fbfbfb" stroke="#cfcfcf" stroke-width=".8" stroke-linejoin="round"/>
<path d="M22.5 22.5h6v5h5v6h-5v5h-6v-5h-5v-6h5z" fill="url(#g31)" stroke="#76a428" stroke-linejoin="round"/></svg>
<svg class="abs" style="left:323px;top:217.5px" width="41" height="37.5" viewBox="0 0 41 38" preserveAspectRatio="none"><defs><linearGradient id="g32" x1="0" y1="0" x2="0" y2="1"><stop offset="0" stop-color="#f08a4a"/><stop offset="1" stop-color="#d9471a"/></linearGradient><linearGradient id="g33" x1="0" y1="0" x2="0" y2="1"><stop offset="0" stop-color="#fdfdfd"/><stop offset="1" stop-color="#bcbcbc"/></linearGradient></defs>
<path d="M2.5 8h9l2 2.5h24v8h-35z" fill="#f4f4f4" stroke="#c9c9c9"/><path d="M4.5 10.2h7" stroke="#f08a4a" stroke-width="1.2"/>
<path d="M20 .8l9.5 10h-5.2v8h-8.6v-8h-5.2z" fill="url(#g33)" stroke="#8f8f8f" stroke-linejoin="round"/>
<path d="M.8 17.5h39.4l-1.3 18.2q-.1 1.5-1.6 1.5H3.7q-1.5 0-1.6-1.5z" fill="url(#g32)" stroke="#cf4a1c"/><radialGradient id="g32h" cx=".3" cy=".25" r=".55"><stop offset="0" stop-color="#f9c884" stop-opacity=".75"/><stop offset="1" stop-color="#f9c884" stop-opacity="0"/></radialGradient><path d="M1.500 18h38l-1.200 17.500H2.700z" fill="url(#g32h)"/></svg>
<svg class="abs" style="left:373.5px;top:242px" width="8.5" height="5" viewBox="0 0 8.5 5" preserveAspectRatio="none"><path d="M0 0h8.5L4.25 5z" fill="#555"/></svg>
<svg class="abs" style="left:389.5px;top:217px" width="39" height="38" viewBox="0 0 39 38" preserveAspectRatio="none"><defs><linearGradient id="g34" x1="0" y1="0" x2="0" y2="1"><stop offset="0" stop-color="#ececec"/><stop offset="1" stop-color="#c2c2c2"/></linearGradient><linearGradient id="g35" x1="0" y1="0" x2="1" y2="0"><stop offset="0" stop-color="#4f4f4f"/><stop offset=".55" stop-color="#949494"/><stop offset="1" stop-color="#505050"/></linearGradient></defs>
<path d="M6.800 9.800h25.400l6 22.700H.8z" fill="url(#g34)" stroke="#acacac" stroke-linejoin="round"/>
<ellipse cx="19.500" cy="23.500" rx="13.800" ry="6.700" fill="#dedede" stroke="#f2f2f2" stroke-width="1.200"/><ellipse cx="19.500" cy="23.300" rx="13.800" ry="6.700" fill="none" stroke="#c4c4c4" stroke-width=".6"/><path d="M16 22.500q3.500 3 7 0" fill="none" stroke="#bdbdbd" stroke-width="1"/>
<circle cx="3.800" cy="30.300" r=".7" fill="#a5a5a5"/><circle cx="35.200" cy="30.300" r=".7" fill="#a5a5a5"/>
<path d="M.8 32.500h37.400v3.300q0 1.600-1.600 1.600H2.400q-1.600 0-1.600-1.600z" fill="url(#g35)" stroke="#5a5a5a" stroke-width=".8"/><path d="M5.500 34.800h15" stroke="#141414" stroke-width="2" stroke-linecap="round"/><defs><linearGradient id="g36" x1="0" y1="0" x2="0" y2="1"><stop offset="0" stop-color="#d9ea72"/><stop offset=".5" stop-color="#c3dc55"/><stop offset="1" stop-color="#8fbe35"/></linearGradient></defs><path d="M12.7 0.6h13.6v10.0h4.7L19.5 23.900000000000002L8.0 10.600000000000001h4.7z" fill="url(#g36)" stroke="#7aab2c" stroke-linejoin="round"/></svg>
<svg class="abs" style="left:438.5px;top:217px" width="39" height="38" viewBox="0 0 39 38" preserveAspectRatio="none"><defs><linearGradient id="g37" x1="0" y1="0" x2="0" y2="1"><stop offset="0" stop-color="#ececec"/><stop offset="1" stop-color="#c2c2c2"/></linearGradient><linearGradient id="g38" x1="0" y1="0" x2="1" y2="0"><stop offset="0" stop-color="#4f4f4f"/><stop offset=".55" stop-color="#949494"/><stop offset="1" stop-color="#505050"/></linearGradient></defs>
<path d="M6.800 9.800h25.400l6 22.700H.8z" fill="url(#g37)" stroke="#acacac" stroke-linejoin="round"/>
<ellipse cx="19.500" cy="23.500" rx="13.800" ry="6.700" fill="#dedede" stroke="#f2f2f2" stroke-width="1.200"/><ellipse cx="19.500" cy="23.300" rx="13.800" ry="6.700" fill="none" stroke="#c4c4c4" stroke-width=".6"/><path d="M16 22.500q3.500 3 7 0" fill="none" stroke="#bdbdbd" stroke-width="1"/>
<circle cx="3.800" cy="30.300" r=".7" fill="#a5a5a5"/><circle cx="35.200" cy="30.300" r=".7" fill="#a5a5a5"/>
<path d="M.8 32.500h37.400v3.300q0 1.600-1.600 1.600H2.400q-1.600 0-1.600-1.600z" fill="url(#g38)" stroke="#5a5a5a" stroke-width=".8"/><path d="M5.500 34.800h15" stroke="#141414" stroke-width="2" stroke-linecap="round"/><defs><linearGradient id="g39" x1="0" y1="0" x2="0" y2="1"><stop offset="0" stop-color="#d9ea72"/><stop offset=".5" stop-color="#c3dc55"/><stop offset="1" stop-color="#8fbe35"/></linearGradient></defs><path d="M13.15 5h13.3v4.799999999999999h5.1L19.8 23.9L8.05 9.799999999999999h5.1z" fill="url(#g39)" stroke="#7aab2c" stroke-linejoin="round"/><rect x="3.200" y=".6" width="32.600" height="7.600" rx="1.800" fill="#fff" stroke="#86b93a"/><rect x="5.300" y="2.600" width="9.800" height="3.600" fill="#cfd2cb"/><path d="M16.800 1.800v5.200" stroke="#8a8a8a" stroke-width="1"/></svg>
<svg class="abs" style="left:488px;top:218px" width="38" height="38.2" viewBox="0 0 38 37" preserveAspectRatio="none"><defs><linearGradient id="g40" x1="0" y1="0" x2="0" y2="1"><stop offset="0" stop-color="#fbfbfb"/><stop offset="1" stop-color="#cfcfcf"/></linearGradient><linearGradient id="g41" x1="0" y1="0" x2="0" y2="1"><stop offset="0" stop-color="#f2f2f2"/><stop offset="1" stop-color="#a9a9a9"/></linearGradient></defs>
<ellipse cx="19" cy="35.300" rx="15" ry="1.500" fill="#d9d9d9"/>
<path d="M6.200 8.500q0-2 2-2h21.600q2 0 2 2V19H6.200z" fill="#3a3a3a"/>
<path d="M8.600 .7h15.800l5 5V17.500H8.600z" fill="#f4f4f4" stroke="#bdbdbd"/><path d="M24.400 .7v5h5z" fill="#e0e0e0" stroke="#bdbdbd" stroke-linejoin="round"/>
<path d="M16.600 5.500h4.800v5h3.400l-5.800 5.600-5.800-5.600h3.400z" fill="url(#g41)" stroke="#b8b8b8" stroke-width=".6"/>
<path d="M3.400 17.800h31.200q2.800 0 2.800 2.800v8q0 2.200-2.200 2.200H2.800q-2.200 0-2.200-2.200v-8q0-2.800 2.800-2.800z" fill="url(#g40)" stroke="#a9a9a9"/>
<rect x="7.200" y="19.300" width="23.600" height="8.200" fill="#2f2f2f"/><path d="M7.200 19.300h23.600v2.400H7.200z" fill="#555"/><circle cx="34" cy="27.400" r=".9" fill="#8ad43a"/>
<path d="M6 30.800h26v3q0 1.300-1.300 1.300H7.300q-1.300 0-1.300-1.300z" fill="#fbfbfb" stroke="#9c9c9c"/><path d="M7.800 32.700h22.400" stroke="#444" stroke-width="1.200"/></svg>
<div class="abs" style="left:535px;top:220px;width:1px;height:35px;background:#d2d2d2"></div>
<svg class="abs" style="left:543.5px;top:221.5px" width="41" height="31" viewBox="0 0 41 31" preserveAspectRatio="none"><defs><linearGradient id="g42" x1="0" y1="0" x2="0" y2="1"><stop offset="0" stop-color="#f8b06a"/><stop offset="1" stop-color="#e8571f"/></linearGradient></defs>
<g><path d="M14.600 5.300L4.900 15.200L14.600 25.300M6 15.200H23.500Q28.600 15.200 31.300 18.800L36 25.200" fill="none" stroke="#c9531c" stroke-width="8.800" stroke-linecap="round" stroke-linejoin="round"/>
<path d="M14.600 5.300L4.900 15.200L14.600 25.300M6 15.200H23.500Q28.600 15.200 31.300 18.800L36 25.200" fill="none" stroke="url(#g42)" stroke-width="6.800" stroke-linecap="round" stroke-linejoin="round"/>
<path d="M14.200 6.400L5.800 14.600H24Q28.500 14.700 31 17.800" fill="none" stroke="#fcd3a4" stroke-width="1.300" stroke-linecap="round" stroke-linejoin="round" opacity=".75"/></g></svg>
<svg class="abs" style="left:592.5px;top:221.5px" width="41" height="31" viewBox="0 0 41 31" preserveAspectRatio="none"><defs><linearGradient id="g43" x1="0" y1="0" x2="0" y2="1"><stop offset="0" stop-color="#dadada"/><stop offset="1" stop-color="#b2b2b2"/></linearGradient></defs>
<g transform="translate(41 0) scale(-1 1)"><path d="M14.600 5.300L4.900 15.200L14.600 25.300M6 15.200H23.500Q28.600 15.200 31.300 18.800L36 25.200" fill="none" stroke="#a3a3a3" stroke-width="8.800" stroke-linecap="round" stroke-linejoin="round"/>
<path d="M14.600 5.300L4.900 15.200L14.600 25.300M6 15.200H23.500Q28.600 15.200 31.300 18.800L36 25.200" fill="none" stroke="url(#g43)" stroke-width="6.800" stroke-linecap="round" stroke-linejoin="round"/>
<path d="M14.200 6.400L5.800 14.600H24Q28.500 14.700 31 17.800" fill="none" stroke="#ececec" stroke-width="1.300" stroke-linecap="round" stroke-linejoin="round" opacity=".75"/></g></svg>
<div class="abs" style="left:641px;top:220px;width:1px;height:35px;background:#d2d2d2"></div>
<div class="abs" style="opacity:.8"><svg class="abs" style="left:651.5px;top:216.5px" width="37" height="41" viewBox="0 0 37 41" preserveAspectRatio="none"><rect x="1" y="1" width="23.5" height="27" fill="#ececec" stroke="#b9b9b9" stroke-width="1.9"/><path d="M5 6.0h15.5" stroke="#cfcfcf" stroke-width="1.4"/><path d="M5 12.0h11.5" stroke="#cfcfcf" stroke-width="1.4"/><path d="M5 18.0h15.5" stroke="#cfcfcf" stroke-width="1.4"/><path d="M5 24.0h11.5" stroke="#cfcfcf" stroke-width="1.4"/><rect x="12" y="12.5" width="23.5" height="27" fill="#eeeeee" stroke="#b3b3b3" stroke-width="1.9"/><path d="M16 17.5h15.5" stroke="#c6c6c6" stroke-width="1.4"/><path d="M16 23.5h11.5" stroke="#c6c6c6" stroke-width="1.4"/><path d="M16 29.5h15.5" stroke="#c6c6c6" stroke-width="1.4"/><path d="M16 35.5h11.5" stroke="#c6c6c6" stroke-width="1.4"/></svg></div>
<svg class="abs" style="left:705px;top:216.5px" width="31" height="41" viewBox="0 0 31 41" preserveAspectRatio="none"><g stroke-linejoin="round"><path d="M22.600 .7l4.400 1.800L19.500 22l1.800 5.500-3.600 1.200L13.200 24z" fill="#dadada" stroke="#a6a6a6" stroke-width="1"/><path d="M8.400 .7L4 2.500 11.500 22l-1.800 5.500 3.600 1.200L17.800 24z" fill="#ededed" stroke="#a6a6a6" stroke-width="1"/>
<ellipse cx="6.500" cy="32.300" rx="4.200" ry="6.700" transform="rotate(22 6.500 32.300)" fill="none" stroke-width="3.400" stroke="#9e9e9e"/><ellipse cx="24.500" cy="32.300" rx="4.200" ry="6.700" transform="rotate(-22 24.500 32.300)" fill="none" stroke-width="3.400" stroke="#9e9e9e"/>
</g><circle cx="15.500" cy="23" r="1.200" fill="#7c7c7c"/></svg>
<svg class="abs" style="left:749.5px;top:216.5px" width="37" height="41" viewBox="0 0 37 41" preserveAspectRatio="none"><defs><linearGradient id="g44" x1="0" y1="0" x2="1" y2="1"><stop offset="0" stop-color="#c9a47e"/><stop offset="1" stop-color="#9b774f"/></linearGradient></defs>
<rect x=".7" y="4" width="25" height="28.5" rx="1" fill="url(#g44)" stroke="#a6825c"/><rect x="3.5" y="7" width="19.5" height="22.5" fill="#b08c63" opacity=".55"/>
<path d="M10.300 .6h5.400l1 4.200h1.500v3.200H7.800V4.800h1.500z" fill="#b9b9b9" stroke="#5e5e5e" stroke-width="1.200"/><rect x="12.2" y="11.8" width="23.8" height="27.8" fill="#ececec" stroke="#7f7f7f" stroke-width="1.8"/><path d="M16.2 16.8h15.8" stroke="#a9a9a9" stroke-width="1.4"/><path d="M16.2 23.1h11.8" stroke="#a9a9a9" stroke-width="1.4"/><path d="M16.2 29.3h15.8" stroke="#a9a9a9" stroke-width="1.4"/><path d="M16.2 35.6h11.8" stroke="#a9a9a9" stroke-width="1.4"/></svg>
<svg class="abs" style="left:802px;top:222px" width="30" height="31" viewBox="0 0 30 31" preserveAspectRatio="none"><defs><radialGradient id="g45" cx=".4" cy=".35" r=".7"><stop offset="0" stop-color="#ffffff"/><stop offset="1" stop-color="#cfd3d8"/></radialGradient></defs>
<path d="M20 20L27.300 27.800" stroke="#2b2b2b" stroke-width="4.800" stroke-linecap="round"/><path d="M20 19.500l7 7.600" stroke="#6b6b6b" stroke-width="1.200" stroke-linecap="round"/>
<circle cx="13" cy="12.800" r="9.300" fill="url(#g45)" stroke="#4a66c4" stroke-width="3.400"/><circle cx="13" cy="12.800" r="10.900" fill="none" stroke="#24408e" stroke-width=".9"/><circle cx="13" cy="12.800" r="7.600" fill="none" stroke="#24408e" stroke-width=".7" opacity=".7"/>
<path d="M26.300 5.200l2.400 2.400L8.500 27.800 4.800 29.200 6.200 25.500z" fill="#f29a38" stroke="#a85c12" stroke-width=".8" stroke-linejoin="round"/><path d="M7.600 25.500l1.900 1.900" stroke="#e9c9a0" stroke-width="1"/><path d="M4.800 29.200l.5-1.400 .9 .9z" fill="#222"/>
<path d="M24.800 6.700l2.400 2.400 1.600-1.600q.6-.6 0-1.200L27.600 5.100q-.6-.6-1.200 0z" fill="#e8453c" stroke="#9c2a24" stroke-width=".6"/></svg>
<div class="abs" style="left:845px;top:220px;width:1px;height:35px;background:#d2d2d2"></div>
<svg class="abs" style="left:853px;top:216.5px" width="42" height="41" viewBox="0 0 42 41" preserveAspectRatio="none"><defs><linearGradient id="g46" x1="0" y1="0" x2="1" y2="1"><stop offset="0" stop-color="#ececec"/><stop offset="1" stop-color="#c2c2c2"/></linearGradient></defs>
<g fill="url(#g46)" stroke="#a9a9a9" stroke-width="1.300" stroke-linejoin="round"><path d="M4.46 5.14L5.16 1.88L16.44 1.88L17.14 5.14L16.16 4.16L19.42 4.86L19.42 16.14L16.16 16.84L17.14 15.86L16.44 19.12L5.16 19.12L4.46 15.86L5.44 16.84L2.18 16.14L2.18 4.86L5.44 4.16z"/><path d="M4.28 30.53L3.99 27.54L11.21 27.54L10.92 30.53L11.07 30.68L14.06 30.39L14.06 37.61L11.07 37.32L10.92 37.47L11.21 40.46L3.99 40.46L4.28 37.47L4.13 37.32L1.14 37.61L1.14 30.39L4.13 30.68z" transform="rotate(45 7.600 34)"/><path d="M25.00 15.89L25.28 12.23L30.32 12.23L30.60 15.89L32.83 16.81L35.61 14.42L39.18 17.99L36.79 20.77L37.71 23.00L41.37 23.28L41.37 28.32L37.71 28.60L36.79 30.83L39.18 33.61L35.61 37.18L32.83 34.79L30.60 35.71L30.32 39.37L25.28 39.37L25.00 35.71L22.77 34.79L19.99 37.18L16.42 33.61L18.81 30.83L17.89 28.60L14.23 28.32L14.23 23.28L17.89 23.00L18.81 20.77L16.42 17.99L19.99 14.42L22.77 16.81z"/></g>
<circle cx="27.800" cy="25.800" r="6.600" fill="#d8d8d8" stroke="#bcbcbc"/><circle cx="27.800" cy="25.800" r="3.200" fill="#f4f4f4" stroke="#a9a9a9" stroke-width="1.200"/>
<circle cx="10.800" cy="10.500" r="5" fill="#d8d8d8" stroke="#bcbcbc"/><circle cx="10.800" cy="10.500" r="2.300" fill="#f4f4f4" stroke="#a9a9a9"/>
<circle cx="7.600" cy="34" r="2" fill="#f4f4f4" stroke="#a9a9a9"/></svg>
<div class="abs" style="left:902px;top:220px;width:1px;height:35px;background:#d2d2d2"></div>
<svg class="abs" style="left:916px;top:222px" width="28" height="30" viewBox="0 0 28 30" preserveAspectRatio="none"><defs><linearGradient id="g47" x1="0" y1="0" x2="0" y2="1"><stop offset="0" stop-color="#ee6a68"/><stop offset="1" stop-color="#eb3a3a"/></linearGradient></defs>
<ellipse cx="14" cy="27.2" rx="10.98" ry="1.300" fill="#dddddd" opacity=".6"/><circle cx="14" cy="13.5" r="12.2" fill="#e61c22" stroke="#f6c2c2" stroke-width="1.200"/><path d="M3.0199999999999996 14.11Q14 15.696 24.98 10.816A10.98 10.98 0 0 0 3.0199999999999996 14.11z" fill="url(#g47)" opacity=".9"/></svg>
<svg class="abs" style="left:965px;top:222px" width="34" height="38" viewBox="0 0 34 38" preserveAspectRatio="none"><defs><linearGradient id="g48" x1="0" y1="0" x2="0" y2="1"><stop offset="0" stop-color="#ee6a68"/><stop offset="1" stop-color="#eb3a3a"/></linearGradient></defs>
<ellipse cx="13.5" cy="27.0" rx="10.8" ry="1.300" fill="#dddddd" opacity=".6"/><circle cx="13.5" cy="13.5" r="12" fill="#e61c22" stroke="#f6c2c2" stroke-width="1.200"/><path d="M2.6999999999999993 14.1Q13.5 15.66 24.3 10.86A10.8 10.8 0 0 0 2.6999999999999993 14.1z" fill="url(#g48)" opacity=".9"/><defs><radialGradient id="g49" cx="0.62" cy=".5" r=".6"><stop offset="0" stop-color="#f6e61e"/><stop offset=".5" stop-color="#e6d62a"/><stop offset="1" stop-color="#c2b21e"/></radialGradient></defs><path d="M15 19.200L32 6.800V31.600z" fill="url(#g49)" stroke="#aa9c0c" stroke-width="1.200" stroke-linejoin="round"/></svg>
<svg class="abs" style="left:1014.5px;top:222px" width="34" height="38" viewBox="0 0 34 38" preserveAspectRatio="none"><defs><linearGradient id="g50" x1="0" y1="0" x2="0" y2="1"><stop offset="0" stop-color="#ee6a68"/><stop offset="1" stop-color="#eb3a3a"/></linearGradient></defs>
<ellipse cx="13.5" cy="27.0" rx="10.8" ry="1.300" fill="#dddddd" opacity=".6"/><circle cx="13.5" cy="13.5" r="12" fill="#e61c22" stroke="#f6c2c2" stroke-width="1.200"/><path d="M2.6999999999999993 14.1Q13.5 15.66 24.3 10.86A10.8 10.8 0 0 0 2.6999999999999993 14.1z" fill="url(#g50)" opacity=".9"/><defs><radialGradient id="g51" cx="0.38" cy=".5" r=".6"><stop offset="0" stop-color="#f6e61e"/><stop offset=".5" stop-color="#e6d62a"/><stop offset="1" stop-color="#c2b21e"/></radialGradient></defs><path d="M30.800 19L13.400 6.600V31.400z" fill="url(#g51)" stroke="#aa9c0c" stroke-width="1.200" stroke-linejoin="round"/></svg>
<svg class="abs" style="left:1058.5px;top:216.5px" width="34" height="38" viewBox="0 0 34 38" preserveAspectRatio="none"><defs><linearGradient id="g53" x1="0" y1="0" x2="0" y2="1"><stop offset="0" stop-color="#ee6a68"/><stop offset="1" stop-color="#eb3a3a"/></linearGradient></defs>
<ellipse cx="20.8" cy="30.2" rx="10.35" ry="1.300" fill="#dddddd" opacity=".6"/><circle cx="20.8" cy="17.2" r="11.5" fill="#e61c22" stroke="#f6c2c2" stroke-width="1.200"/><path d="M10.450000000000001 17.775Q20.8 19.27 31.15 14.67A10.35 10.35 0 0 0 10.450000000000001 17.775z" fill="url(#g53)" opacity=".9"/><defs><linearGradient id="g52" x1="0" y1="0" x2="1" y2="0"><stop offset="0" stop-color="#f7e65a"/><stop offset="1" stop-color="#d9b400"/></linearGradient></defs>
<path d="M4.500 4L9.800 14.500" stroke="#8a5a1a" stroke-width="5.800" stroke-linecap="round"/><path d="M4.500 4L9.800 14.500" stroke="#c0842e" stroke-width="3.800" stroke-linecap="round"/><circle cx="4.400" cy="3.700" r=".8" fill="#fff"/>
<path d="M5.300 15l10-4.600 1.200 2.500-10 4.600z" fill="#f0d020" stroke="#b39600" stroke-width=".6"/><path d="M6.500 17.500l10-4.600 1.600 3.300-10 4.600z" fill="#d61f26" stroke="#8f1015" stroke-width=".7"/>
<path d="M8.100 20.800l10-4.600 14 11.300q-6 7-19 8.800z" fill="url(#g52)" stroke="#b39600" stroke-width=".9" stroke-linejoin="round"/>
<path d="M11 21l5 14M13.500 19.800l8 13.500M15.800 18.500l11 11.500M17 17.500l12.500 9.800" stroke="#b89b00" stroke-width=".8" fill="none"/></svg>
<svg class="abs" style="left:1107px;top:219.5px" width="41" height="36" viewBox="0 0 41 36" preserveAspectRatio="none"><defs><linearGradient id="g54" x1="0" y1="0" x2="0" y2="1"><stop offset="0" stop-color="#ececec"/><stop offset="1" stop-color="#c6c6c6"/></linearGradient></defs><rect x="0.7" y="0.7" width="15" height="10" fill="url(#g54)" stroke="#b9b9b9" stroke-width="1"/><rect x="1.7" y="1.7" width="13" height="8" fill="none" stroke="#f2f2f2" stroke-width=".8" opacity=".8"/><defs><linearGradient id="g55" x1="0" y1="0" x2="0" y2="1"><stop offset="0" stop-color="#ececec"/><stop offset="1" stop-color="#c6c6c6"/></linearGradient></defs><rect x="0.7" y="12.8" width="15" height="10" fill="url(#g55)" stroke="#b9b9b9" stroke-width="1"/><rect x="1.7" y="13.8" width="13" height="8" fill="none" stroke="#f2f2f2" stroke-width=".8" opacity=".8"/><defs><linearGradient id="g56" x1="0" y1="0" x2="0" y2="1"><stop offset="0" stop-color="#ececec"/><stop offset="1" stop-color="#c6c6c6"/></linearGradient></defs><rect x="0.7" y="24.9" width="15" height="10" fill="url(#g56)" stroke="#b9b9b9" stroke-width="1"/><rect x="1.7" y="25.9" width="13" height="8" fill="none" stroke="#f2f2f2" stroke-width=".8" opacity=".8"/><path d="M33 1.500q8 3 6 11-2.500 7-12 7.500v6.500L15.500 17 27 7.500v6q7-.5 8-5.500 .5-3.500-2-6.500z" fill="#dedede" stroke="#c6c6c6" stroke-width="1" stroke-linejoin="round"/></svg>
<svg class="abs" style="left:1156px;top:219.5px" width="41" height="36" viewBox="0 0 41 36" preserveAspectRatio="none"><defs><linearGradient id="g57" x1="0" y1="0" x2="0" y2="1"><stop offset="0" stop-color="#ececec"/><stop offset="1" stop-color="#c6c6c6"/></linearGradient></defs><rect x="0.7" y="0.7" width="15" height="10" fill="url(#g57)" stroke="#b9b9b9" stroke-width="1"/><rect x="1.7" y="1.7" width="13" height="8" fill="none" stroke="#f2f2f2" stroke-width=".8" opacity=".8"/><defs><linearGradient id="g58" x1="0" y1="0" x2="0" y2="1"><stop offset="0" stop-color="#ececec"/><stop offset="1" stop-color="#c6c6c6"/></linearGradient></defs><rect x="0.7" y="24.9" width="15" height="10" fill="url(#g58)" stroke="#b9b9b9" stroke-width="1"/><rect x="1.7" y="25.9" width="13" height="8" fill="none" stroke="#f2f2f2" stroke-width=".8" opacity=".8"/><path d="M38.500 1.500q2 9-2.500 14.500-3 3.500-9 4v7L15.500 17.500 27 8v6q6-1 8.500-5 2-3.500 3-7.500z" fill="#dedede" stroke="#c6c6c6" stroke-width="1" stroke-linejoin="round"/></svg>
<svg class="abs" style="left:1205px;top:219.5px" width="41" height="37" viewBox="0 0 41 37" preserveAspectRatio="none"><defs><linearGradient id="g59" x1="0" y1="0" x2="0" y2="1"><stop offset="0" stop-color="#ececec"/><stop offset="1" stop-color="#c6c6c6"/></linearGradient></defs><rect x="0.7" y="0.7" width="15" height="10" fill="url(#g59)" stroke="#b9b9b9" stroke-width="1"/><rect x="1.7" y="1.7" width="13" height="8" fill="none" stroke="#f2f2f2" stroke-width=".8" opacity=".8"/><defs><linearGradient id="g60" x1="0" y1="0" x2="0" y2="1"><stop offset="0" stop-color="#ececec"/><stop offset="1" stop-color="#c6c6c6"/></linearGradient></defs><rect x="0.7" y="24.9" width="15" height="10" fill="url(#g60)" stroke="#b9b9b9" stroke-width="1"/><rect x="1.7" y="25.9" width="13" height="8" fill="none" stroke="#f2f2f2" stroke-width=".8" opacity=".8"/><path d="M12.500 14q10-2.500 16 1.500 4 3 4.500 9.500h6.500L29 36.500 18.500 25h6.500q-.5-4.500-4-7-3.500-2.500-8.500-4z" fill="#dedede" stroke="#c6c6c6" stroke-width="1" stroke-linejoin="round"/></svg>
<svg class="abs" style="left:1263.5px;top:223px" width="22" height="27" viewBox="0 0 22 27" preserveAspectRatio="none"><defs><linearGradient id="g61" x1="0" y1="0" x2="1" y2="0"><stop offset="0" stop-color="#ececec"/><stop offset="1" stop-color="#cfcfcf"/></linearGradient></defs><path d="M1 1L20.500 13 1 25.500z" fill="url(#g61)" stroke="#c4c4c4" stroke-width="1.200" stroke-linejoin="round"/></svg>
<svg class="abs" style="left:1313px;top:225.5px" width="20" height="27" viewBox="0 0 20 27" preserveAspectRatio="none"><ellipse cx="10" cy="24.500" rx="9" ry="1.300" fill="#dcdcdc"/><rect x="1" y="1" width="17.500" height="19" fill="#8a8a8a" stroke="#a9a9a9" stroke-width="1"/></svg>
<div class="abs" style="left:267px;top:310px;width:1653px;height:1px;background:#b9b9b9"></div>
<div class="abs" style="left:266px;top:272px;width:150px;height:40px;background:linear-gradient(180deg,#ffffff,#fbfbfb 60%,#f3f3f3);border:1px solid #c2c2c2;border-bottom:none;border-radius:4px 4px 0 0"></div>
<span class="t" style="left:281.5px;top:284.36px;font-size:18px;letter-spacing:.2px">subplots.m</span>
<svg class="abs" style="left:378.5px;top:283px" width="17" height="17" viewBox="0 0 17 17" preserveAspectRatio="none"><circle cx="8.500" cy="8.500" r="8" fill="#c7162b"/><path d="M5.600 5.600l5.800 5.800M11.400 5.600l-5.800 5.800" stroke="#fff" stroke-width="1.600"/></svg>
<div class="abs" style="left:266px;top:311px;width:1654px;height:706px;background:#fcfcfc;border:1px solid #b9b9b9;border-top:none"></div>
<div class="abs" style="left:268px;top:312px;width:1650px;height:671px;background:#fff;border:1px solid #b4b4b4"></div>
<div class="abs" style="left:269px;top:313px;width:61px;height:669px;background:#e0e0e0"></div>
<div class="abs" style="left:330px;top:313px;width:14px;height:669px;background:#d4d4d4;background-image:conic-gradient(#e0e0e0 25%,#c9c9c9 0 50%,#e0e0e0 0 75%,#c9c9c9 0);background-size:2px 2px"></div>
<div class="abs" style="left:1548px;top:313px;width:1px;height:669px;background:#c0c0c0"></div>
<span class="code" style="left:269px;top:315.65px;width:58px;text-align:right">1</span>
<span class="code" style="left:344.700px;top:315.65px"><span class="c">% Subplots Example</span></span>
<span class="code" style="left:269px;top:346.65px;width:58px;text-align:right">2</span>
<span class="code" style="left:344.700px;top:346.65px"><span class="c">% www.TestingDocs.com</span></span>
<span class="code" style="left:269px;top:377.65px;width:58px;text-align:right">3</span>
<span class="code" style="left:344.700px;top:377.65px"><span class="c">% x points vector for plot</span></span>
<span class="code" style="left:269px;top:408.65px;width:58px;text-align:right">4</span>
<span class="code" style="left:344.700px;top:408.65px">x<span class="o">=</span>linspace<span class="o">(</span><span class="n">0</span><span class="o">,</span><span class="n">5</span><span class="o">*</span>pi<span class="o">,</span><span class="n">50</span><span class="o">);</span></span>
<span class="code" style="left:269px;top:439.65px;width:58px;text-align:right">5</span>
<span class="code" style="left:344.700px;top:439.65px">figure<span class="o">;</span></span>
<span class="code" style="left:269px;top:470.65px;width:58px;text-align:right">6</span>
<span class="code" style="left:344.700px;top:470.65px">hold on<span class="o">;</span></span>
<span class="code" style="left:269px;top:501.65px;width:58px;text-align:right">7</span>
<span class="code" style="left:344.700px;top:501.65px">subplot<span class="o">(</span><span class="n">2</span><span class="o">,</span><span class="n">1</span><span class="o">,</span><span class="n">1</span><span class="o">);</span></span>
<span class="code" style="left:269px;top:532.65px;width:58px;text-align:right">8</span>
<span class="code" style="left:344.700px;top:532.65px">y1<span class="o">=</span>cos<span class="o">(</span>x<span class="o">);</span></span>
<span class="code" style="left:269px;top:563.65px;width:58px;text-align:right">9</span>
<span class="code" style="left:344.700px;top:563.65px">plot<span class="o">(</span>x<span class="o">,</span>y1<span class="o">);</span></span>
<span class="code" style="left:269px;top:594.65px;width:58px;text-align:right">10</span>
<span class="code" style="left:344.700px;top:594.65px">title<span class="o">(</span><span class="s">'cos(x) - www.TestingDocs.com'</span><span class="o">);</span></span>
<span class="code" style="left:269px;top:625.65px;width:58px;text-align:right">11</span>
<span class="code" style="left:344.700px;top:625.65px">xlabel<span class="o">(</span><span class="s">'x-axis'</span><span class="o">);</span></span>
<span class="code" style="left:269px;top:656.65px;width:58px;text-align:right">12</span>
<span class="code" style="left:344.700px;top:656.65px">ylabel<span class="o">(</span><span class="s">'y-axis'</span><span class="o">);</span></span>
<span class="code" style="left:269px;top:687.65px;width:58px;text-align:right">13</span>
<span class="code" style="left:269px;top:718.65px;width:58px;text-align:right">14</span>
<span class="code" style="left:344.700px;top:718.65px">subplot<span class="o">(</span><span class="n">2</span><span class="o">,</span><span class="n">1</span><span class="o">,</span><span class="n">2</span><span class="o">);</span></span>
<span class="code" style="left:269px;top:749.65px;width:58px;text-align:right">15</span>
<span class="code" style="left:344.700px;top:749.65px">y2<span class="o">=</span> sin<span class="o">(</span>x<span class="o">);</span></span>
<span class="code" style="left:269px;top:780.65px;width:58px;text-align:right">16</span>
<span class="code" style="left:344.700px;top:780.65px">plot<span class="o">(</span>x<span class="o">,</span>y2<span class="o">);</span></span>
<span class="code" style="left:269px;top:811.65px;width:58px;text-align:right">17</span>
<span class="code" style="left:344.700px;top:811.65px">title<span class="o">(</span><span class="s">'sin(x) - www.TestingDocs.com '</span><span class="o">);</span></span>
<span class="code" style="left:269px;top:842.65px;width:58px;text-align:right">18</span>
<span class="code" style="left:344.700px;top:842.65px">xlabel<span class="o">(</span><span class="s">'x-axis'</span><span class="o">);</span></span>
<span class="code" style="left:269px;top:873.65px;width:58px;text-align:right">19</span>
<span class="code" style="left:344.700px;top:873.65px">ylabel<span class="o">(</span><span class="s">'y-axis'</span><span class="o">);</span></span>
<span class="code" style="left:269px;top:904.65px;width:58px;text-align:right">20</span>
<span class="t" style="left:270.5px;top:995.46px;font-size:18px;letter-spacing:0.1px">line: 17</span>
<span class="t" style="left:366.5px;top:995.46px;font-size:18px;letter-spacing:0.1px">col: 37</span>
<span class="t" style="left:451px;top:995.46px;font-size:18px;letter-spacing:-0.05px">encoding: UTF-8</span>
<span class="t" style="left:602.5px;top:995.46px;font-size:18px;letter-spacing:-0.4px">eol: CRLF</span>
<div class="abs" style="left:267px;top:1018px;width:1653px;height:1px;background:#dcdcdc"></div>
<div class="abs" style="left:266px;top:1019px;width:185px;height:32px;background:linear-gradient(180deg,#e2e2e2,#dadada);border:1px solid #c3c3c3;border-top:1px solid #d0d0d0;border-radius:0 0 4px 4px"></div>
<span class="t" style="left:281.5px;top:1027.46px;font-size:18px;letter-spacing:0.05px">Command Window</span>
<div class="abs" style="left:450px;top:1019px;width:159px;height:32px;background:linear-gradient(180deg,#e2e2e2,#dadada);border:1px solid #c3c3c3;border-top:1px solid #d0d0d0;border-radius:0 0 4px 4px"></div>
<span class="t" style="left:466px;top:1027.46px;font-size:18px;letter-spacing:0.4px">Documentation</span>
<div class="abs" style="left:688px;top:1019px;width:151px;height:32px;background:linear-gradient(180deg,#e2e2e2,#dadada);border:1px solid #c3c3c3;border-top:1px solid #d0d0d0;border-radius:0 0 4px 4px"></div>
<span class="t" style="left:703.5px;top:1027.46px;font-size:18px;letter-spacing:0.25px">Variable Editor</span>
<div class="abs" style="left:608px;top:1016px;width:81px;height:36px;background:linear-gradient(180deg,#fcfcfc,#f1f1f1);border:1px solid #bdbdbd;border-top:none;border-radius:0 0 4px 4px"></div>
<span class="t" style="left:623.5px;top:1028.66px;font-size:18px;letter-spacing:0.3px">Editor</span>
</body>
</html>
